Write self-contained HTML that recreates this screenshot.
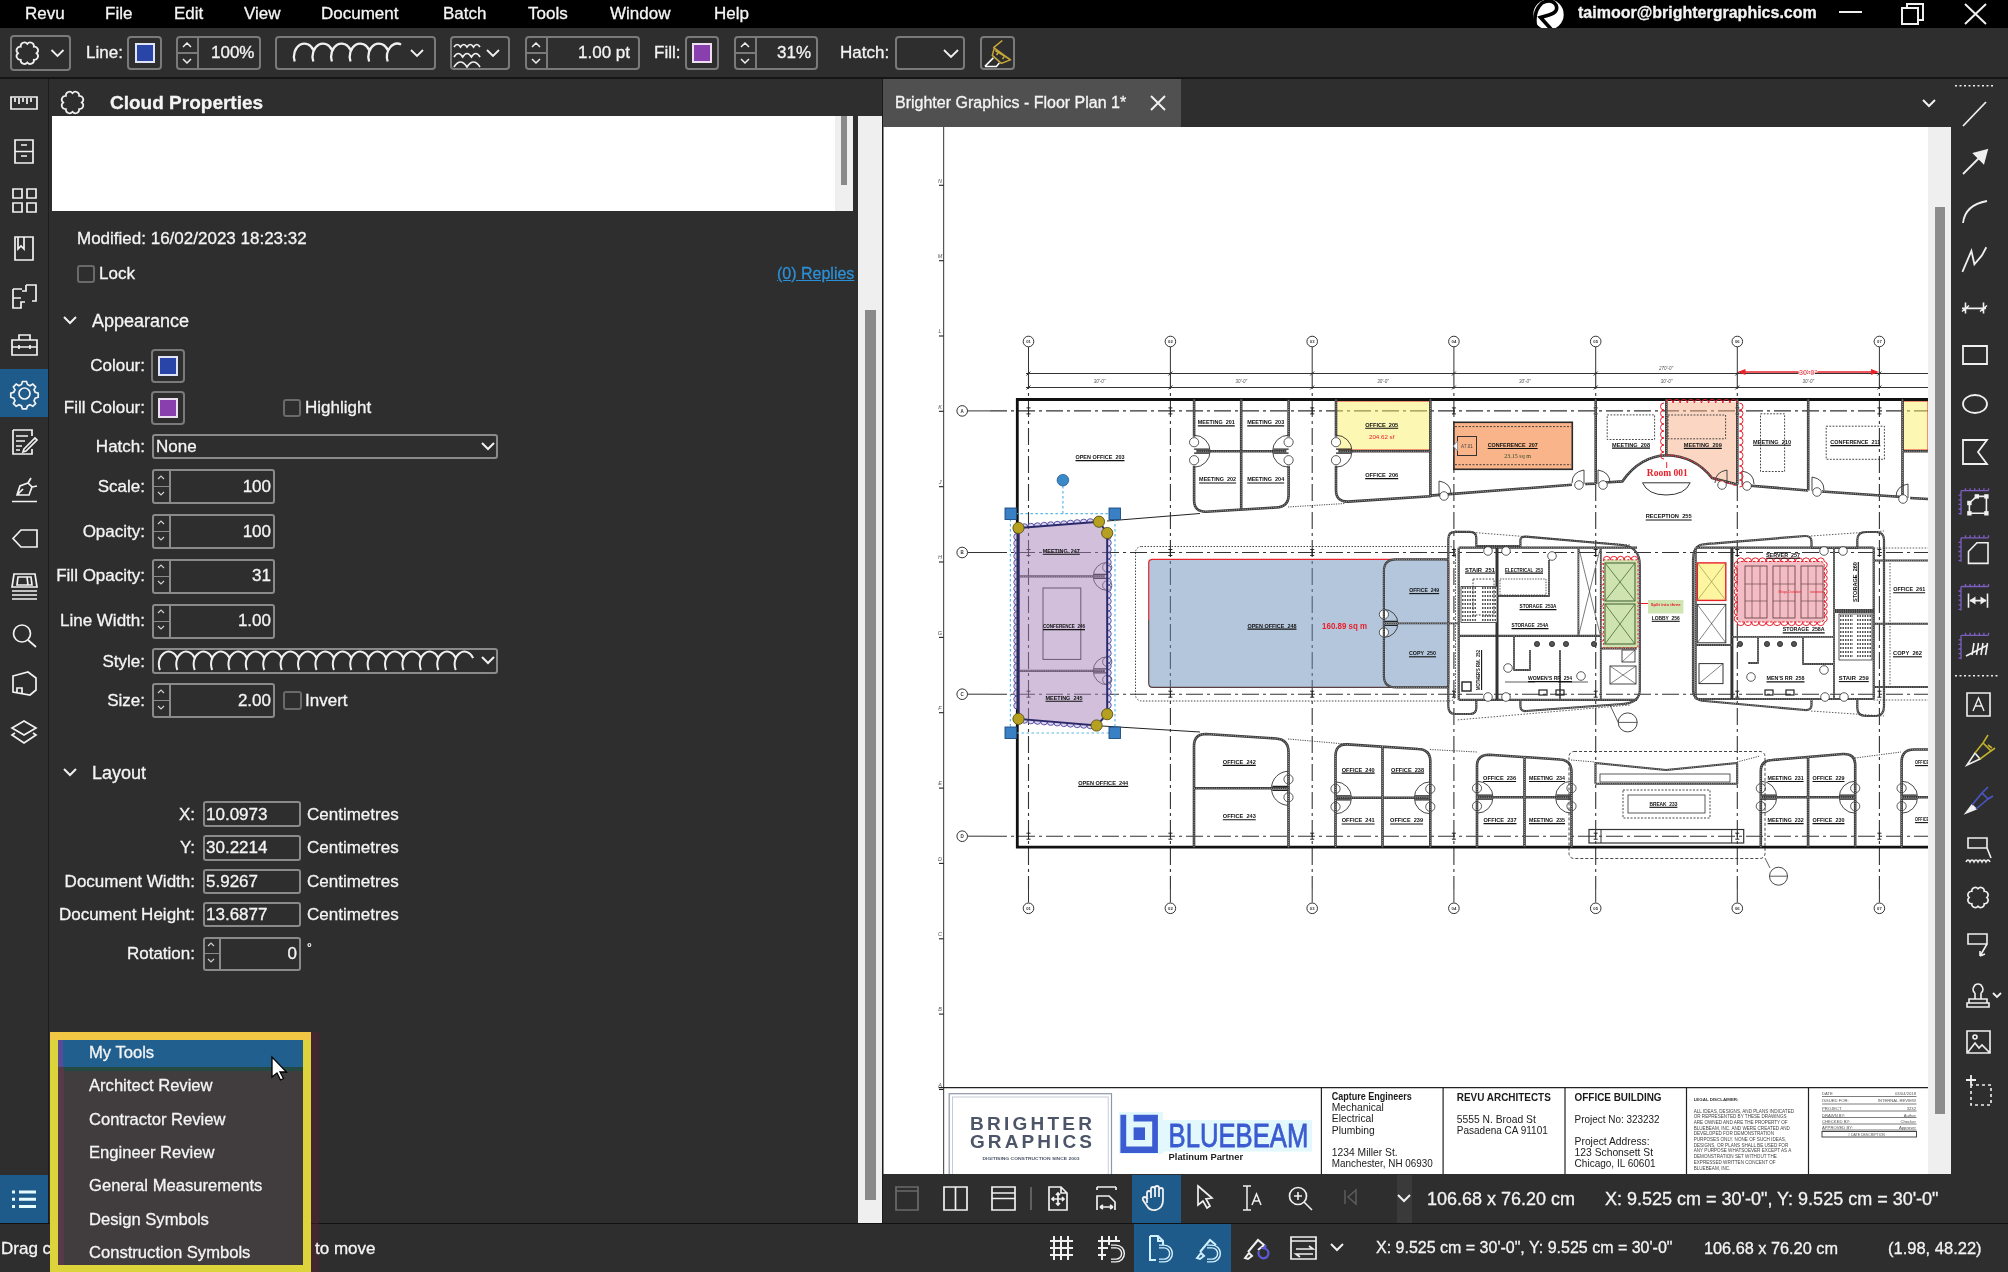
<!DOCTYPE html>
<html><head><meta charset="utf-8"><style>
*{margin:0;padding:0;box-sizing:border-box}
body{will-change:transform;width:2008px;height:1272px;overflow:hidden;background:#2e2e2e;font-family:"Liberation Sans",sans-serif;color:#f4f4f4;position:relative}
.a{position:absolute}
.t{position:absolute;white-space:pre;line-height:1;font-size:17px;-webkit-text-stroke:0.3px currentColor}
.box{position:absolute;border:2px solid #7a7a7a;border-radius:4px}
.fld{position:absolute;border:2px solid #8a8a8a;border-radius:3px}
svg{position:absolute;overflow:visible}
</style></head><body>
<!-- menubar -->
<div class="a" style="left:0;top:0;width:2008px;height:28px;background:#000"></div>
<div class="t" style="left:25px;top:5px">Revu</div>
<div class="t" style="left:105px;top:5px">File</div>
<div class="t" style="left:174px;top:5px">Edit</div>
<div class="t" style="left:244px;top:5px">View</div>
<div class="t" style="left:321px;top:5px">Document</div>
<div class="t" style="left:443px;top:5px">Batch</div>
<div class="t" style="left:528px;top:5px">Tools</div>
<div class="t" style="left:610px;top:5px">Window</div>
<div class="t" style="left:714px;top:5px">Help</div>
<div class="t" style="left:1578px;top:5px;font-weight:bold;font-size:16px">taimoor@brightergraphics.com</div>
<!-- toolbar -->
<!-- toolbar items -->
<div class="box" style="left:10px;top:35px;width:61px;height:36px"></div>
<svg style="left:0;top:0" width="1100" height="80" viewBox="0 0 1100 80" fill="none" stroke="#f0f0f0" stroke-width="1.8">
 <path id="cld" d="M27.3,43.9 A3.70,3.70 0 0 1 33.9,46.6 A3.70,3.70 0 0 1 36.6,53.2 A3.70,3.70 0 0 1 33.9,59.8 A3.70,3.70 0 0 1 27.3,62.5 A3.70,3.70 0 0 1 20.7,59.8 A3.70,3.70 0 0 1 18.0,53.2 A3.70,3.70 0 0 1 20.7,46.6 A3.70,3.70 0 0 1 27.3,43.9z"/>
 <path d="M51.5,50 l6,6 l6,-6"/>
 <path d="M411,50 l6,6 l6,-6 M487,50 l6,6 l6,-6 M944,50 l7,7 l7,-7"/>
 <path d="M183,47 l4,-4 l4,4 M183,59 l4,4 l4,-4 M532,47 l4,-4 l4,4 M532,59 l4,4 l4,-4 M741,47 l4,-4 l4,4 M741,59 l4,4 l4,-4" stroke-width="1.5"/>
 <path stroke-width="2.3" d="M294.7,61.5 A10.5,13 0 0 1 313.7,50.5 M313.3,61.5 A10.5,13 0 0 1 332.3,50.5 M331.9,61.5 A10.5,13 0 0 1 350.9,50.5 M350.5,61.5 A10.5,13 0 0 1 369.5,50.5 M369.1,61.5 A10.5,13 0 0 1 388.1,50.5 M387.7,61.5 A10.5,13 0 0 1 401.1,44.5"/>
 <path stroke-width="1.7" d="M454,47 q3.25,-5 6.5,0 q3.25,-5 6.5,0 q3.25,-5 6.5,0 q3.25,-5 6.5,0 M454,57 q4.3,-7 8.7,0 q4.3,-7 8.7,0 q4.3,-7 8.7,0 M454,67 q6.5,-10 13,0 q6.5,-10 13,0"/>
</svg>
<div class="t" style="left:86px;top:44px;font-size:17px">Line:</div>
<div class="box" style="left:127px;top:36px;width:35px;height:34px"></div>
<div class="a" style="left:135px;top:43px;width:20px;height:20px;background:#2a45a8;border:2px solid #dfe3f5"></div>
<div class="box" style="left:176px;top:36px;width:85px;height:34px"></div>
<div class="a" style="left:197px;top:37px;width:2px;height:32px;background:#7a7a7a"></div>
<div class="a" style="left:178px;top:52px;width:20px;height:2px;background:#7a7a7a"></div>
<div class="t" style="left:211px;top:44px;font-size:17px">100%</div>
<div class="box" style="left:275px;top:36px;width:161px;height:34px"></div>
<div class="box" style="left:450px;top:36px;width:60px;height:34px"></div>
<div class="box" style="left:525px;top:36px;width:115px;height:34px"></div>
<div class="a" style="left:546px;top:37px;width:2px;height:32px;background:#7a7a7a"></div>
<div class="a" style="left:527px;top:52px;width:20px;height:2px;background:#7a7a7a"></div>
<div class="t" style="left:578px;top:44px;font-size:17px">1.00 pt</div>
<div class="t" style="left:654px;top:44px;font-size:17px">Fill:</div>
<div class="box" style="left:685px;top:36px;width:34px;height:34px"></div>
<div class="a" style="left:692px;top:43px;width:20px;height:20px;background:#8a3fae;border:2px solid #ecdff2"></div>
<div class="box" style="left:734px;top:36px;width:84px;height:34px"></div>
<div class="a" style="left:755px;top:37px;width:2px;height:32px;background:#7a7a7a"></div>
<div class="a" style="left:736px;top:52px;width:20px;height:2px;background:#7a7a7a"></div>
<div class="t" style="left:777px;top:44px;font-size:17px">31%</div>
<div class="t" style="left:840px;top:44px;font-size:17px">Hatch:</div>
<div class="box" style="left:895px;top:36px;width:70px;height:34px"></div>
<div class="box" style="left:980px;top:36px;width:35px;height:34px"></div>
<svg style="left:980px;top:36px" width="35" height="34" viewBox="0 0 35 34" fill="none" stroke-width="1.5">
 <path stroke="#c9a83a" d="M13.3,11.9 L22.3,4.5 M14.3,11.9 L12.3,19.4 L21.3,27.4 L30.3,23.9 Z M15.3,14.5 L29.5,23 M18,17 l-1.5,2 M24,21 l-1.5,2"/>
 <path stroke="#ffffff" d="M4.9,30.4 L13.3,21.9 M4.9,30.4 H16.4 L19.3,26.9"/>
</svg>
<!-- window controls -->
<svg style="left:1520px;top:0;overflow:hidden" width="488" height="28" viewBox="1520 0 488 28" fill="none" stroke="#f0f0f0" stroke-width="2">
 <circle cx="1548.5" cy="14.5" r="15.2" fill="#fff" stroke="none"/>
 <path d="M1536,29 Q1532,12 1542,3 Q1551,-2 1556,5 Q1559,12 1549,15 L1540.5,17.5 L1551,29" stroke="#000" stroke-width="3.6"/>
 <path d="M1839,12 h23"/>
 <path d="M1902,8 h16 v16 h-16z M1907,8 v-4 h16 v16 h-5"/>
 <path d="M1965,4 l21,20 M1986,4 l-21,20"/>
</svg>

<div class="a" style="left:0;top:77px;width:2008px;height:2px;background:#151515"></div>
<!-- left sidebar -->
<div class="a" style="left:48px;top:79px;width:1px;height:1145px;background:#1c1c1c"></div>
<div class="a" style="left:0;top:369px;width:48px;height:48px;background:#1f5b8a"></div>
<div class="a" style="left:0;top:1175px;width:48px;height:48px;background:#1f5b8a"></div>

<svg style="left:0;top:0" width="48" height="1272" viewBox="0 0 48 1272" fill="none" stroke="#f2f2f2" stroke-width="1.7">
 <!-- ruler -->
 <path d="M11,97 h26 v12 h-26z M15,98 v4 M19,98 v6 M23,98 v4 M27,98 v6 M31,98 v4"/>
 <!-- cabinet -->
 <path d="M15,140 h18 v23 h-18z M15,151.5 h18 M21,145 h6 M21,156 h6"/>
 <!-- grid -->
 <path d="M13,189 h9 v9 h-9z M27,189 h9 v9 h-9z M13,203 h9 v9 h-9z M27,203 h9 v9 h-9z"/>
 <!-- bookmark -->
 <path d="M15,237 h18 v23 h-18z M18,237 v12 l3,-3 l3,3 v-12"/>
 <!-- floorplan -->
 <path d="M13,289 h9 M26,285 h10 v16 h-4 M13,289 v19 h8 v-6 h4 M13,298 h8 M26,285 v6 h-4"/>
 <!-- toolbox -->
 <path d="M12,340 h25 v15 h-25z M12,347 h25 M19,340 v-5 h11 v5 M19,345 v4 M30,345 v4"/>
 <!-- gear -->
 <circle cx="24.5" cy="393.5" r="5.5"/>
 <path d="M22.5,381.5 h4 l1,3 l2.5,1.2 l2.8,-1.6 l2.8,2.8 l-1.6,2.8 l1.2,2.5 l3,1 v4 l-3,1 l-1.2,2.5 l1.6,2.8 l-2.8,2.8 l-2.8,-1.6 l-2.5,1.2 l-1,3 h-4 l-1,-3 l-2.5,-1.2 l-2.8,1.6 l-2.8,-2.8 l1.6,-2.8 l-1.2,-2.5 l-3,-1 v-4 l3,-1 l1.2,-2.5 l-1.6,-2.8 l2.8,-2.8 l2.8,1.6 l2.5,-1.2z"/>
 <!-- edit -->
 <path d="M13,430 h19 v6 M13,430 v24 h19 v-5 M16,436 h12 M16,441 h9 M16,446 h6 M16,450 h4 M24,449 l11,-11 l2,2 l-11,11 l-3,1z"/>
 <!-- pen -->
 <path d="M12,501.5 h25 M17,495 l3,-9 l8,-3 l4,4 l-3,8z M17,495 l6,-6 M28,483 l3,-5 M32,487 l5,-1"/>
 <!-- tag -->
 <path d="M37,530 v17 h-16 l-8,-8.5 l8,-8.5z"/>
 <!-- scanner -->
 <path d="M14,574 h21 l2,13 h-25z M18,577 h13 l1,8 h-15z M27,577 l1,8 M12,591 h25 M12,595 h25 M12,599 h25"/>
 <!-- search -->
 <circle cx="22" cy="633.5" r="8.5"/>
 <path d="M28,640 l8,7"/>
 <!-- 3d house -->
 <path d="M13,676 l15,-4 l8,6 v12 l-6,5 l-17,-3z M17,693 v-5 h5 v6"/>
 <!-- layers -->
 <path d="M24,721 l12,7 l-12,7 l-12,-7z M15,733 l-3,2 l12,8 l12,-8 l-3,-2"/>
 <!-- list -->
 <path d="M12,1192 h3 M12,1199.2 h3 M12,1206.4 h3 M19,1192 h17 M19,1199.2 h17 M19,1206.4 h17" stroke-width="3" stroke="#e6fbff"/>
</svg>
<!-- panel -->
<div class="a" style="left:52px;top:116px;width:801px;height:95px;background:#fff"></div>
<div class="a" style="left:835px;top:116px;width:18px;height:95px;background:#efefef"></div>
<div class="a" style="left:841px;top:116px;width:6px;height:69px;background:#8a8a8a"></div>
<div class="a" style="left:858px;top:116px;width:24px;height:1107px;background:#efefef"></div>
<div class="a" style="left:865px;top:310px;width:11px;height:890px;background:#8a8a8a"></div>
<div class="a" style="left:882px;top:79px;width:1px;height:1145px;background:#1a1a1a"></div>

<svg style="left:0;top:0" width="880" height="1272" viewBox="0 0 880 1272" fill="none" stroke="#f0f0f0" stroke-width="1.7">
 <path d="M72.5,93.2 A3.70,3.70 0 0 1 79.1,95.9 A3.70,3.70 0 0 1 81.8,102.5 A3.70,3.70 0 0 1 79.1,109.1 A3.70,3.70 0 0 1 72.5,111.8 A3.70,3.70 0 0 1 65.9,109.1 A3.70,3.70 0 0 1 63.2,102.5 A3.70,3.70 0 0 1 65.9,95.9 A3.70,3.70 0 0 1 72.5,93.2z"/>
 <path d="M64,317 l6,6 l6,-6 M64,769 l6,6 l6,-6" stroke-width="2"/>
 <path d="M482,443 l6,6 l6,-6 M482,657 l6,6 l6,-6" stroke-width="2"/>
 <path d="M160.0,670 A9.8,12.5 0 0 1 177.3,658.2 M177.4,670 A9.8,12.5 0 0 1 194.7,658.2 M194.8,670 A9.8,12.5 0 0 1 212.1,658.2 M212.2,670 A9.8,12.5 0 0 1 229.5,658.2 M229.6,670 A9.8,12.5 0 0 1 246.9,658.2 M247.0,670 A9.8,12.5 0 0 1 264.3,658.2 M264.4,670 A9.8,12.5 0 0 1 281.7,658.2 M281.8,670 A9.8,12.5 0 0 1 299.1,658.2 M299.2,670 A9.8,12.5 0 0 1 316.5,658.2 M316.6,670 A9.8,12.5 0 0 1 333.9,658.2 M334.0,670 A9.8,12.5 0 0 1 351.3,658.2 M351.4,670 A9.8,12.5 0 0 1 368.7,658.2 M368.8,670 A9.8,12.5 0 0 1 386.1,658.2 M386.2,670 A9.8,12.5 0 0 1 403.5,658.2 M403.6,670 A9.8,12.5 0 0 1 420.9,658.2 M421.0,670 A9.8,12.5 0 0 1 438.3,658.2 M438.4,670 A9.8,12.5 0 0 1 455.7,658.2 M455.8,670 A9.8,12.5 0 0 1 473.1,658.2" stroke-width="2" clip-path="url(#stclip)"/>
 <clipPath id="stclip"><rect x="155" y="648" width="320" height="26"/></clipPath>
 <path d="M158,479 l3,-3 l3,3 M158,492 l3,3 l3,-3 M158,524 l3,-3 l3,3 M158,537 l3,3 l3,-3 M158,568 l3,-3 l3,3 M158,581 l3,3 l3,-3 M158,613 l3,-3 l3,3 M158,626 l3,3 l3,-3 M158,693 l3,-3 l3,3 M158,706 l3,3 l3,-3 M208,946 l3,-3 l3,3 M208,959 l3,3 l3,-3" stroke-width="1.2" stroke="#cfcfcf"/>
</svg>
<div class="t" style="left:110px;top:93px;font-size:19px;font-weight:bold">Cloud Properties</div>
<div class="t" style="left:77px;top:230px">Modified: 16/02/2023 18:23:32</div>
<div class="fld" style="left:77px;top:265px;width:18px;height:18px;border-color:#6a6a6a"></div>
<div class="t" style="left:99px;top:265px">Lock</div>
<div class="t" style="left:777px;top:266px;font-size:16px;color:#2d8fd6;text-decoration:underline">(0) Replies</div>
<div class="t" style="left:92px;top:312px;font-size:18px">Appearance</div>
<div class="t" style="left:92px;top:764px;font-size:18px">Layout</div>
<div class="t" style="right:1863px;top:357px">Colour:</div>
<div class="box" style="left:151px;top:349px;width:34px;height:34px"></div>
<div class="a" style="left:158px;top:356px;width:20px;height:20px;background:#2a45a8;border:2px solid #dfe3f5"></div>
<div class="t" style="right:1863px;top:399px">Fill Colour:</div>
<div class="box" style="left:151px;top:391px;width:34px;height:34px"></div>
<div class="a" style="left:158px;top:398px;width:20px;height:20px;background:#8a3fae;border:2px solid #ecdff2"></div>
<div class="fld" style="left:283px;top:399px;width:18px;height:18px;border-color:#6a6a6a"></div>
<div class="t" style="left:305px;top:399px">Highlight</div>
<div class="t" style="right:1863px;top:438px">Hatch:</div>
<div class="fld" style="left:152px;top:434px;width:346px;height:25px"></div>
<div class="t" style="left:156px;top:438px">None</div>
<div class="t" style="right:1863px;top:478px">Scale:</div>
<div class="fld" style="left:152px;top:469px;width:123px;height:35px"></div>
<div class="a" style="left:169px;top:470px;width:2px;height:33px;background:#8a8a8a"></div>
<div class="a" style="left:153px;top:486px;width:17px;height:1px;background:#8a8a8a"></div>
<div class="t" style="right:1737px;top:478px">100</div>
<div class="t" style="right:1863px;top:523px">Opacity:</div>
<div class="fld" style="left:152px;top:514px;width:123px;height:35px"></div>
<div class="a" style="left:169px;top:515px;width:2px;height:33px;background:#8a8a8a"></div>
<div class="a" style="left:153px;top:531px;width:17px;height:1px;background:#8a8a8a"></div>
<div class="t" style="right:1737px;top:523px">100</div>
<div class="t" style="right:1863px;top:567px">Fill Opacity:</div>
<div class="fld" style="left:152px;top:559px;width:123px;height:35px"></div>
<div class="a" style="left:169px;top:560px;width:2px;height:33px;background:#8a8a8a"></div>
<div class="a" style="left:153px;top:576px;width:17px;height:1px;background:#8a8a8a"></div>
<div class="t" style="right:1737px;top:567px">31</div>
<div class="t" style="right:1863px;top:612px">Line Width:</div>
<div class="fld" style="left:152px;top:604px;width:123px;height:35px"></div>
<div class="a" style="left:169px;top:605px;width:2px;height:33px;background:#8a8a8a"></div>
<div class="a" style="left:153px;top:621px;width:17px;height:1px;background:#8a8a8a"></div>
<div class="t" style="right:1737px;top:612px">1.00</div>
<div class="t" style="right:1863px;top:653px">Style:</div>
<div class="fld" style="left:152px;top:648px;width:346px;height:26px"></div>
<div class="t" style="right:1863px;top:692px">Size:</div>
<div class="fld" style="left:152px;top:683px;width:123px;height:35px"></div>
<div class="a" style="left:169px;top:684px;width:2px;height:33px;background:#8a8a8a"></div>
<div class="a" style="left:153px;top:700px;width:17px;height:1px;background:#8a8a8a"></div>
<div class="t" style="right:1737px;top:692px">2.00</div>
<div class="fld" style="left:283px;top:691px;width:19px;height:19px;border-color:#6a6a6a"></div>
<div class="t" style="left:305px;top:692px">Invert</div>
<div class="t" style="right:1813px;top:806px">X:</div>
<div class="fld" style="left:203px;top:801px;width:98px;height:26px"></div>
<div class="t" style="left:206px;top:806px">10.0973</div>
<div class="t" style="left:307px;top:806px">Centimetres</div>
<div class="t" style="right:1813px;top:839px">Y:</div>
<div class="fld" style="left:203px;top:835px;width:98px;height:26px"></div>
<div class="t" style="left:206px;top:839px">30.2214</div>
<div class="t" style="left:307px;top:839px">Centimetres</div>
<div class="t" style="right:1813px;top:873px">Document Width:</div>
<div class="fld" style="left:203px;top:869px;width:98px;height:25px"></div>
<div class="t" style="left:206px;top:873px">5.9267</div>
<div class="t" style="left:307px;top:873px">Centimetres</div>
<div class="t" style="right:1813px;top:906px">Document Height:</div>
<div class="fld" style="left:203px;top:902px;width:98px;height:25px"></div>
<div class="t" style="left:206px;top:906px">13.6877</div>
<div class="t" style="left:307px;top:906px">Centimetres</div>
<div class="t" style="right:1813px;top:945px">Rotation:</div>
<div class="fld" style="left:203px;top:937px;width:98px;height:34px"></div>
<div class="a" style="left:219px;top:938px;width:2px;height:32px;background:#8a8a8a"></div>
<div class="a" style="left:204px;top:953px;width:16px;height:1px;background:#8a8a8a"></div>
<div class="t" style="right:1711px;top:945px">0</div>
<div class="t" style="left:307px;top:942px;font-size:12px">°</div>
<!-- popup --><div style="position:absolute;left:0;top:0;z-index:5">
<div class="a" style="left:311px;top:1032px;width:8px;height:240px;background:rgba(90,30,50,0.45)"></div>
<div class="a" style="left:50px;top:1032px;width:261px;height:240px;background:#dcd43a"></div>
<div class="a" style="left:50px;top:1032px;width:261px;height:8px;background:#f2c645"></div>
<div class="a" style="left:58px;top:1040px;width:245px;height:225px;background:#413d3f"></div>
<div class="a" style="left:58px;top:1040px;width:6px;height:225px;background:#573a48"></div>
<div class="a" style="left:58px;top:1040px;width:245px;height:27px;background:#21608e"></div>
<div class="a" style="left:58px;top:1040px;width:5px;height:27px;background:#5a4a9a"></div>
<div class="a" style="left:64px;top:1067px;width:239px;height:4px;background:#254a44"></div>
<div class="t" style="left:89px;top:1045px;font-size:16.6px">My Tools</div>
<div class="t" style="left:89px;top:1078px;font-size:16.6px">Architect Review</div>
<div class="t" style="left:89px;top:1112px;font-size:16.6px">Contractor Review</div>
<div class="t" style="left:89px;top:1145px;font-size:16.6px">Engineer Review</div>
<div class="t" style="left:89px;top:1178px;font-size:16.6px">General Measurements</div>
<div class="t" style="left:89px;top:1212px;font-size:16.6px">Design Symbols</div>
<div class="t" style="left:89px;top:1245px;font-size:16.6px">Construction Symbols</div>
<svg style="left:270px;top:1055px" width="20" height="30" viewBox="0 0 20 30"><path d="M2,2 v20 l5,-4 l3.5,7 l3,-1.5 l-3.5,-6.5 h6.5z" fill="#fff" stroke="#000" stroke-width="1.3"/></svg>
</div>
<div class="t" style="left:1px;top:1240px">Drag c</div>
<div class="t" style="left:315px;top:1240px;z-index:6">to move</div>
<!-- tab bar -->
<div class="a" style="left:883px;top:79px;width:298px;height:48px;background:#505050"></div>
<div class="t" style="left:895px;top:95px;font-size:16px">Brighter Graphics - Floor Plan 1*</div>
<!-- doc -->
<div class="a" style="left:883px;top:127px;width:1068px;height:1047px;background:#fff"></div>
<div class="a" style="left:1928px;top:127px;width:23px;height:1047px;background:#efefef"></div>
<!--PLAN--><svg style="left:883px;top:127px;overflow:hidden" width="1045" height="1047" viewBox="883 127 1045 1047" font-family="Liberation Sans"><line x1="883.5" y1="127" x2="883.5" y2="1174" stroke="#8a8a8a" stroke-width="1"/>
<line x1="943.6" y1="127" x2="943.6" y2="1174" stroke="#555" stroke-width="1.2"/>
<line x1="939" y1="185.3" x2="943.6" y2="185.3" stroke="#222" stroke-width="1.1"/>
<text x="940" y="182.5" font-size="5.5" fill="#555" text-anchor="middle" font-style="italic">N</text>
<line x1="939" y1="260.7" x2="943.6" y2="260.7" stroke="#222" stroke-width="1.1"/>
<text x="940" y="257.9" font-size="5.5" fill="#555" text-anchor="middle" font-style="italic">M</text>
<line x1="939" y1="336.0" x2="943.6" y2="336.0" stroke="#222" stroke-width="1.1"/>
<text x="940" y="333.2" font-size="5.5" fill="#555" text-anchor="middle" font-style="italic">L</text>
<line x1="939" y1="411.3" x2="943.6" y2="411.3" stroke="#222" stroke-width="1.1"/>
<text x="940" y="408.5" font-size="5.5" fill="#555" text-anchor="middle" font-style="italic">K</text>
<line x1="939" y1="486.7" x2="943.6" y2="486.7" stroke="#222" stroke-width="1.1"/>
<text x="940" y="483.9" font-size="5.5" fill="#555" text-anchor="middle" font-style="italic">J</text>
<line x1="939" y1="562.0" x2="943.6" y2="562.0" stroke="#222" stroke-width="1.1"/>
<text x="940" y="559.2" font-size="5.5" fill="#555" text-anchor="middle" font-style="italic">H</text>
<line x1="939" y1="637.4" x2="943.6" y2="637.4" stroke="#222" stroke-width="1.1"/>
<text x="940" y="634.6" font-size="5.5" fill="#555" text-anchor="middle" font-style="italic">G</text>
<line x1="939" y1="712.7" x2="943.6" y2="712.7" stroke="#222" stroke-width="1.1"/>
<text x="940" y="709.9" font-size="5.5" fill="#555" text-anchor="middle" font-style="italic">F</text>
<line x1="939" y1="788.1" x2="943.6" y2="788.1" stroke="#222" stroke-width="1.1"/>
<text x="940" y="785.3" font-size="5.5" fill="#555" text-anchor="middle" font-style="italic">E</text>
<line x1="939" y1="863.4" x2="943.6" y2="863.4" stroke="#222" stroke-width="1.1"/>
<text x="940" y="860.6" font-size="5.5" fill="#555" text-anchor="middle" font-style="italic">D</text>
<line x1="939" y1="938.8" x2="943.6" y2="938.8" stroke="#222" stroke-width="1.1"/>
<text x="940" y="936.0" font-size="5.5" fill="#555" text-anchor="middle" font-style="italic">C</text>
<line x1="939" y1="1014.1" x2="943.6" y2="1014.1" stroke="#222" stroke-width="1.1"/>
<text x="940" y="1011.3" font-size="5.5" fill="#555" text-anchor="middle" font-style="italic">B</text>
<line x1="939" y1="1089.5" x2="943.6" y2="1089.5" stroke="#222" stroke-width="1.1"/>
<text x="940" y="1086.7" font-size="5.5" fill="#555" text-anchor="middle" font-style="italic">A</text>
<line x1="1028.5" y1="347" x2="1028.5" y2="372" stroke="#333" stroke-width="1"/>
<line x1="1028.5" y1="372" x2="1028.5" y2="889" stroke="#333" stroke-width="1.1" stroke-dasharray="17 4 3 4"/>
<line x1="1028.5" y1="889" x2="1028.5" y2="902.5" stroke="#333" stroke-width="1"/>
<circle cx="1028.5" cy="341.5" r="5.3" fill="#fff" stroke="#333" stroke-width="1"/>
<text x="1028.5" y="343.1" font-size="4.2" fill="#333" text-anchor="middle" font-weight="bold">01</text>
<circle cx="1028.5" cy="908.3" r="5.3" fill="#fff" stroke="#333" stroke-width="1"/>
<text x="1028.5" y="909.9" font-size="4.2" fill="#333" text-anchor="middle" font-weight="bold">01</text>
<line x1="1170.4" y1="347" x2="1170.4" y2="372" stroke="#333" stroke-width="1"/>
<line x1="1170.4" y1="372" x2="1170.4" y2="889" stroke="#333" stroke-width="1.1" stroke-dasharray="17 4 3 4"/>
<line x1="1170.4" y1="889" x2="1170.4" y2="902.5" stroke="#333" stroke-width="1"/>
<circle cx="1170.4" cy="341.5" r="5.3" fill="#fff" stroke="#333" stroke-width="1"/>
<text x="1170.4" y="343.1" font-size="4.2" fill="#333" text-anchor="middle" font-weight="bold">02</text>
<circle cx="1170.4" cy="908.3" r="5.3" fill="#fff" stroke="#333" stroke-width="1"/>
<text x="1170.4" y="909.9" font-size="4.2" fill="#333" text-anchor="middle" font-weight="bold">02</text>
<line x1="1312.2" y1="347" x2="1312.2" y2="372" stroke="#333" stroke-width="1"/>
<line x1="1312.2" y1="372" x2="1312.2" y2="889" stroke="#333" stroke-width="1.1" stroke-dasharray="17 4 3 4"/>
<line x1="1312.2" y1="889" x2="1312.2" y2="902.5" stroke="#333" stroke-width="1"/>
<circle cx="1312.2" cy="341.5" r="5.3" fill="#fff" stroke="#333" stroke-width="1"/>
<text x="1312.2" y="343.1" font-size="4.2" fill="#333" text-anchor="middle" font-weight="bold">03</text>
<circle cx="1312.2" cy="908.3" r="5.3" fill="#fff" stroke="#333" stroke-width="1"/>
<text x="1312.2" y="909.9" font-size="4.2" fill="#333" text-anchor="middle" font-weight="bold">03</text>
<line x1="1453.9" y1="347" x2="1453.9" y2="372" stroke="#333" stroke-width="1"/>
<line x1="1453.9" y1="372" x2="1453.9" y2="889" stroke="#333" stroke-width="1.1" stroke-dasharray="17 4 3 4"/>
<line x1="1453.9" y1="889" x2="1453.9" y2="902.5" stroke="#333" stroke-width="1"/>
<circle cx="1453.9" cy="341.5" r="5.3" fill="#fff" stroke="#333" stroke-width="1"/>
<text x="1453.9" y="343.1" font-size="4.2" fill="#333" text-anchor="middle" font-weight="bold">04</text>
<circle cx="1453.9" cy="908.3" r="5.3" fill="#fff" stroke="#333" stroke-width="1"/>
<text x="1453.9" y="909.9" font-size="4.2" fill="#333" text-anchor="middle" font-weight="bold">04</text>
<line x1="1595.7" y1="347" x2="1595.7" y2="372" stroke="#333" stroke-width="1"/>
<line x1="1595.7" y1="372" x2="1595.7" y2="889" stroke="#333" stroke-width="1.1" stroke-dasharray="17 4 3 4"/>
<line x1="1595.7" y1="889" x2="1595.7" y2="902.5" stroke="#333" stroke-width="1"/>
<circle cx="1595.7" cy="341.5" r="5.3" fill="#fff" stroke="#333" stroke-width="1"/>
<text x="1595.7" y="343.1" font-size="4.2" fill="#333" text-anchor="middle" font-weight="bold">05</text>
<circle cx="1595.7" cy="908.3" r="5.3" fill="#fff" stroke="#333" stroke-width="1"/>
<text x="1595.7" y="909.9" font-size="4.2" fill="#333" text-anchor="middle" font-weight="bold">05</text>
<line x1="1737.3" y1="347" x2="1737.3" y2="372" stroke="#333" stroke-width="1"/>
<line x1="1737.3" y1="372" x2="1737.3" y2="889" stroke="#333" stroke-width="1.1" stroke-dasharray="17 4 3 4"/>
<line x1="1737.3" y1="889" x2="1737.3" y2="902.5" stroke="#333" stroke-width="1"/>
<circle cx="1737.3" cy="341.5" r="5.3" fill="#fff" stroke="#333" stroke-width="1"/>
<text x="1737.3" y="343.1" font-size="4.2" fill="#333" text-anchor="middle" font-weight="bold">06</text>
<circle cx="1737.3" cy="908.3" r="5.3" fill="#fff" stroke="#333" stroke-width="1"/>
<text x="1737.3" y="909.9" font-size="4.2" fill="#333" text-anchor="middle" font-weight="bold">06</text>
<line x1="1879.4" y1="347" x2="1879.4" y2="372" stroke="#333" stroke-width="1"/>
<line x1="1879.4" y1="372" x2="1879.4" y2="889" stroke="#333" stroke-width="1.1" stroke-dasharray="17 4 3 4"/>
<line x1="1879.4" y1="889" x2="1879.4" y2="902.5" stroke="#333" stroke-width="1"/>
<circle cx="1879.4" cy="341.5" r="5.3" fill="#fff" stroke="#333" stroke-width="1"/>
<text x="1879.4" y="343.1" font-size="4.2" fill="#333" text-anchor="middle" font-weight="bold">07</text>
<circle cx="1879.4" cy="908.3" r="5.3" fill="#fff" stroke="#333" stroke-width="1"/>
<text x="1879.4" y="909.9" font-size="4.2" fill="#333" text-anchor="middle" font-weight="bold">07</text>
<line x1="967.5" y1="410.9" x2="990" y2="410.9" stroke="#333" stroke-width="1"/>
<line x1="990" y1="410.9" x2="1928" y2="410.9" stroke="#333" stroke-width="1.1" stroke-dasharray="17 4 3 4"/>
<circle cx="962.2" cy="410.9" r="5.3" fill="#fff" stroke="#333" stroke-width="1"/>
<text x="962.2" y="412.5" font-size="4.5" fill="#333" text-anchor="middle" font-weight="bold">A</text>
<path d="M1026.5,407.9 h4 M1026.5,413.9 h4 M1028.5,407.9 v6" stroke="#222" stroke-width="1"/>
<path d="M1168.4,407.9 h4 M1168.4,413.9 h4 M1170.4,407.9 v6" stroke="#222" stroke-width="1"/>
<path d="M1310.2,407.9 h4 M1310.2,413.9 h4 M1312.2,407.9 v6" stroke="#222" stroke-width="1"/>
<path d="M1451.9,407.9 h4 M1451.9,413.9 h4 M1453.9,407.9 v6" stroke="#222" stroke-width="1"/>
<path d="M1593.7,407.9 h4 M1593.7,413.9 h4 M1595.7,407.9 v6" stroke="#222" stroke-width="1"/>
<path d="M1735.3,407.9 h4 M1735.3,413.9 h4 M1737.3,407.9 v6" stroke="#222" stroke-width="1"/>
<path d="M1877.4,407.9 h4 M1877.4,413.9 h4 M1879.4,407.9 v6" stroke="#222" stroke-width="1"/>
<line x1="967.5" y1="552.5" x2="990" y2="552.5" stroke="#333" stroke-width="1"/>
<line x1="990" y1="552.5" x2="1928" y2="552.5" stroke="#333" stroke-width="1.1" stroke-dasharray="17 4 3 4"/>
<circle cx="962.2" cy="552.5" r="5.3" fill="#fff" stroke="#333" stroke-width="1"/>
<text x="962.2" y="554.1" font-size="4.5" fill="#333" text-anchor="middle" font-weight="bold">B</text>
<path d="M1026.5,549.5 h4 M1026.5,555.5 h4 M1028.5,549.5 v6" stroke="#222" stroke-width="1"/>
<path d="M1168.4,549.5 h4 M1168.4,555.5 h4 M1170.4,549.5 v6" stroke="#222" stroke-width="1"/>
<path d="M1310.2,549.5 h4 M1310.2,555.5 h4 M1312.2,549.5 v6" stroke="#222" stroke-width="1"/>
<path d="M1451.9,549.5 h4 M1451.9,555.5 h4 M1453.9,549.5 v6" stroke="#222" stroke-width="1"/>
<path d="M1593.7,549.5 h4 M1593.7,555.5 h4 M1595.7,549.5 v6" stroke="#222" stroke-width="1"/>
<path d="M1735.3,549.5 h4 M1735.3,555.5 h4 M1737.3,549.5 v6" stroke="#222" stroke-width="1"/>
<path d="M1877.4,549.5 h4 M1877.4,555.5 h4 M1879.4,549.5 v6" stroke="#222" stroke-width="1"/>
<line x1="967.5" y1="694.2" x2="990" y2="694.2" stroke="#333" stroke-width="1"/>
<line x1="990" y1="694.2" x2="1928" y2="694.2" stroke="#333" stroke-width="1.1" stroke-dasharray="17 4 3 4"/>
<circle cx="962.2" cy="694.2" r="5.3" fill="#fff" stroke="#333" stroke-width="1"/>
<text x="962.2" y="695.8000000000001" font-size="4.5" fill="#333" text-anchor="middle" font-weight="bold">C</text>
<path d="M1026.5,691.2 h4 M1026.5,697.2 h4 M1028.5,691.2 v6" stroke="#222" stroke-width="1"/>
<path d="M1168.4,691.2 h4 M1168.4,697.2 h4 M1170.4,691.2 v6" stroke="#222" stroke-width="1"/>
<path d="M1310.2,691.2 h4 M1310.2,697.2 h4 M1312.2,691.2 v6" stroke="#222" stroke-width="1"/>
<path d="M1451.9,691.2 h4 M1451.9,697.2 h4 M1453.9,691.2 v6" stroke="#222" stroke-width="1"/>
<path d="M1593.7,691.2 h4 M1593.7,697.2 h4 M1595.7,691.2 v6" stroke="#222" stroke-width="1"/>
<path d="M1735.3,691.2 h4 M1735.3,697.2 h4 M1737.3,691.2 v6" stroke="#222" stroke-width="1"/>
<path d="M1877.4,691.2 h4 M1877.4,697.2 h4 M1879.4,691.2 v6" stroke="#222" stroke-width="1"/>
<line x1="967.5" y1="836.2" x2="990" y2="836.2" stroke="#333" stroke-width="1"/>
<line x1="990" y1="836.2" x2="1928" y2="836.2" stroke="#333" stroke-width="1.1" stroke-dasharray="17 4 3 4"/>
<circle cx="962.2" cy="836.2" r="5.3" fill="#fff" stroke="#333" stroke-width="1"/>
<text x="962.2" y="837.8000000000001" font-size="4.5" fill="#333" text-anchor="middle" font-weight="bold">D</text>
<path d="M1026.5,833.2 h4 M1026.5,839.2 h4 M1028.5,833.2 v6" stroke="#222" stroke-width="1"/>
<path d="M1168.4,833.2 h4 M1168.4,839.2 h4 M1170.4,833.2 v6" stroke="#222" stroke-width="1"/>
<path d="M1310.2,833.2 h4 M1310.2,839.2 h4 M1312.2,833.2 v6" stroke="#222" stroke-width="1"/>
<path d="M1451.9,833.2 h4 M1451.9,839.2 h4 M1453.9,833.2 v6" stroke="#222" stroke-width="1"/>
<path d="M1593.7,833.2 h4 M1593.7,839.2 h4 M1595.7,833.2 v6" stroke="#222" stroke-width="1"/>
<path d="M1735.3,833.2 h4 M1735.3,839.2 h4 M1737.3,833.2 v6" stroke="#222" stroke-width="1"/>
<path d="M1877.4,833.2 h4 M1877.4,839.2 h4 M1879.4,833.2 v6" stroke="#222" stroke-width="1"/>
<line x1="1026" y1="373.5" x2="1928" y2="373.5" stroke="#333" stroke-width="1"/>
<line x1="1026" y1="387.5" x2="1928" y2="387.5" stroke="#333" stroke-width="1"/>
<path d="M1026.5,375.5 l4,-4 M1026.5,389.5 l4,-4" stroke="#333" stroke-width="1"/>
<path d="M1168.4,375.5 l4,-4 M1168.4,389.5 l4,-4" stroke="#333" stroke-width="1"/>
<path d="M1310.2,375.5 l4,-4 M1310.2,389.5 l4,-4" stroke="#333" stroke-width="1"/>
<path d="M1451.9,375.5 l4,-4 M1451.9,389.5 l4,-4" stroke="#333" stroke-width="1"/>
<path d="M1593.7,375.5 l4,-4 M1593.7,389.5 l4,-4" stroke="#333" stroke-width="1"/>
<path d="M1735.3,375.5 l4,-4 M1735.3,389.5 l4,-4" stroke="#333" stroke-width="1"/>
<path d="M1877.4,375.5 l4,-4 M1877.4,389.5 l4,-4" stroke="#333" stroke-width="1"/>
<text x="1099.5" y="383" font-size="4.5" fill="#555" text-anchor="middle" font-style="italic">30'-0"</text>
<text x="1241.3" y="383" font-size="4.5" fill="#555" text-anchor="middle" font-style="italic">30'-0"</text>
<text x="1383.1" y="383" font-size="4.5" fill="#555" text-anchor="middle" font-style="italic">30'-0"</text>
<text x="1524.8" y="383" font-size="4.5" fill="#555" text-anchor="middle" font-style="italic">30'-0"</text>
<text x="1666.5" y="383" font-size="4.5" fill="#555" text-anchor="middle" font-style="italic">30'-0"</text>
<text x="1808.3" y="383" font-size="4.5" fill="#555" text-anchor="middle" font-style="italic">30'-0"</text>
<text x="1666" y="369.5" font-size="4.5" fill="#555" text-anchor="middle" font-style="italic">270'-0"</text>
<line x1="1740" y1="372" x2="1876" y2="372" stroke="#e8202a" stroke-width="1.4"/>
<path d="M1737.5,372 l8,-3 v6z M1879,372 l-8,-3 v6z" fill="#e8202a"/>
<text x="1808" y="374.5" font-size="7" fill="#e8202a" text-anchor="middle" stroke="#fff" stroke-width="1.5" paint-order="stroke">30'-0"</text>
<rect x="1336" y="401" width="94.5" height="49" fill="#fbef69" fill-opacity="0.5" stroke="#d9302a" stroke-width="1"/>
<rect x="1903" y="401" width="25" height="49" fill="#fbef69" fill-opacity="0.5" stroke="#d9302a" stroke-width="1"/>
<rect x="1453.9" y="422.3" width="118.4" height="47" fill="#f9b48a" stroke="#2a2a2a" stroke-width="1.6"/>
<path d="M1455,426.6 h116 M1455,464.7 h116" stroke="#333" stroke-width="0.9" stroke-dasharray="2 1.5"/>
<rect x="1457.5" y="436.5" width="19" height="19" fill="none" stroke="#333" stroke-width="1"/>
<path d="M1457.5,441 l-4,5 l4,5" fill="#fff" stroke="#7a8aa0" stroke-width="0.8"/>
<text x="1467" y="447.5" font-size="4.5" fill="#444" text-anchor="middle">A7.01</text>
<path d="M1666.3,402 H1737.3 V484 L1724,484 Q1712,482 1705,470 Q1690,455 1666.3,455.5 Z" fill="#f7af87" fill-opacity="0.5"/>
<rect x="1148.7" y="559.4" width="300" height="128" rx="4" fill="#698db9" fill-opacity="0.5"/>
<path d="M1148.7,620 V563 q0,-3.6 4,-3.6 H1444 q4.7,0 4.7,4 V600" fill="none" stroke="#e52530" stroke-width="1.2"/>
<path d="M1148.7,620 V683 q0,4.4 4,4.4 H1444 q4.7,0 4.7,-4 V600" fill="none" stroke="#5a4040" stroke-width="1.2"/>
<rect x="1135.5" y="546.5" width="320" height="154.5" rx="6" fill="none" stroke="#333" stroke-width="0.9" stroke-dasharray="1.5 1.5"/>
<rect x="1603.4" y="559.8" width="34.6" height="88" fill="#9fc761" fill-opacity="0.5"/>
<rect x="1737" y="561.5" width="87.4" height="60.5" rx="4" fill="#e97989" fill-opacity="0.5"/>
<rect x="1648" y="600" width="35.4" height="13.5" fill="#cfe6b3"/>
<text x="1665.7" y="605.5" font-size="4.3" fill="#e8202a" text-anchor="middle" font-weight="bold">Split into three</text>
<line x1="1638" y1="603.5" x2="1648" y2="603.5" stroke="#e8202a" stroke-width="1"/>
<path d="M1928,399.5 H1017.3 V847.2 H1928" fill="none" stroke="#111" stroke-width="2.8"/>
<circle cx="1028" cy="399.5" r="1.6" fill="#111"/>
<circle cx="1051" cy="399.5" r="1.6" fill="#111"/>
<circle cx="1074" cy="399.5" r="1.6" fill="#111"/>
<circle cx="1097" cy="399.5" r="1.6" fill="#111"/>
<circle cx="1120" cy="399.5" r="1.6" fill="#111"/>
<circle cx="1143" cy="399.5" r="1.6" fill="#111"/>
<circle cx="1166" cy="399.5" r="1.6" fill="#111"/>
<circle cx="1189" cy="399.5" r="1.6" fill="#111"/>
<circle cx="1212" cy="399.5" r="1.6" fill="#111"/>
<circle cx="1235" cy="399.5" r="1.6" fill="#111"/>
<circle cx="1258" cy="399.5" r="1.6" fill="#111"/>
<circle cx="1281" cy="399.5" r="1.6" fill="#111"/>
<circle cx="1304" cy="399.5" r="1.6" fill="#111"/>
<circle cx="1327" cy="399.5" r="1.6" fill="#111"/>
<circle cx="1350" cy="399.5" r="1.6" fill="#111"/>
<circle cx="1373" cy="399.5" r="1.6" fill="#111"/>
<circle cx="1396" cy="399.5" r="1.6" fill="#111"/>
<circle cx="1419" cy="399.5" r="1.6" fill="#111"/>
<circle cx="1442" cy="399.5" r="1.6" fill="#111"/>
<circle cx="1465" cy="399.5" r="1.6" fill="#111"/>
<circle cx="1488" cy="399.5" r="1.6" fill="#111"/>
<circle cx="1511" cy="399.5" r="1.6" fill="#111"/>
<circle cx="1534" cy="399.5" r="1.6" fill="#111"/>
<circle cx="1557" cy="399.5" r="1.6" fill="#111"/>
<circle cx="1580" cy="399.5" r="1.6" fill="#111"/>
<circle cx="1603" cy="399.5" r="1.6" fill="#111"/>
<circle cx="1626" cy="399.5" r="1.6" fill="#111"/>
<circle cx="1649" cy="399.5" r="1.6" fill="#111"/>
<circle cx="1672" cy="399.5" r="1.6" fill="#111"/>
<circle cx="1695" cy="399.5" r="1.6" fill="#111"/>
<circle cx="1718" cy="399.5" r="1.6" fill="#111"/>
<circle cx="1741" cy="399.5" r="1.6" fill="#111"/>
<circle cx="1764" cy="399.5" r="1.6" fill="#111"/>
<circle cx="1787" cy="399.5" r="1.6" fill="#111"/>
<circle cx="1810" cy="399.5" r="1.6" fill="#111"/>
<circle cx="1833" cy="399.5" r="1.6" fill="#111"/>
<circle cx="1856" cy="399.5" r="1.6" fill="#111"/>
<circle cx="1879" cy="399.5" r="1.6" fill="#111"/>
<circle cx="1902" cy="399.5" r="1.6" fill="#111"/>
<circle cx="1925" cy="399.5" r="1.6" fill="#111"/>
<path d="M1194.1,399.5 V500 Q1194.1,512 1206,511.7 L1276,507.5 Q1288.6,507 1288.6,495 V399.5" fill="none" stroke="#3a3a3a" stroke-width="2.6" stroke-linejoin="round"/>
<path d="M1194.1,399.5 V500 Q1194.1,512 1206,511.7 L1276,507.5 Q1288.6,507 1288.6,495 V399.5" fill="none" stroke="#d8d8d8" stroke-width="0.7" stroke-dasharray="1 1.2"/>
<path d="M1241.2,399.5 V509.5" fill="none" stroke="#3a3a3a" stroke-width="2.6" stroke-linejoin="round"/>
<path d="M1241.2,399.5 V509.5" fill="none" stroke="#d8d8d8" stroke-width="0.7" stroke-dasharray="1 1.2"/>
<path d="M1194.1,451.2 H1288.6" fill="none" stroke="#3a3a3a" stroke-width="2.6" stroke-linejoin="round"/>
<path d="M1194.1,451.2 H1288.6" fill="none" stroke="#d8d8d8" stroke-width="0.7" stroke-dasharray="1 1.2"/>
<path d="M1336,399.5 V490 Q1336,502 1348,501.6 L1430.4,496.2 V399.5" fill="none" stroke="#3a3a3a" stroke-width="2.6" stroke-linejoin="round"/>
<path d="M1336,399.5 V490 Q1336,502 1348,501.6 L1430.4,496.2 V399.5" fill="none" stroke="#d8d8d8" stroke-width="0.7" stroke-dasharray="1 1.2"/>
<path d="M1336,451.2 H1430.4" fill="none" stroke="#3a3a3a" stroke-width="2.6" stroke-linejoin="round"/>
<path d="M1336,451.2 H1430.4" fill="none" stroke="#d8d8d8" stroke-width="0.7" stroke-dasharray="1 1.2"/>
<path d="M1430,495.6 L1572,484.8 M1585,484 L1595.7,483.6 M1595.7,399.5 V484 M1605,482.5 L1622.3,481.4 Q1640,456 1666.7,455.2 Q1695,456 1712,478 L1737.3,484.5 M1737.3,399.5 V484.5" fill="none" stroke="#3a3a3a" stroke-width="2.6" stroke-linejoin="round"/>
<path d="M1430,495.6 L1572,484.8 M1585,484 L1595.7,483.6 M1595.7,399.5 V484 M1605,482.5 L1622.3,481.4 Q1640,456 1666.7,455.2 Q1695,456 1712,478 L1737.3,484.5 M1737.3,399.5 V484.5" fill="none" stroke="#d8d8d8" stroke-width="0.7" stroke-dasharray="1 1.2"/>
<path d="M1666.3,399.5 V455" fill="none" stroke="#3a3a3a" stroke-width="2.6" stroke-linejoin="round"/>
<path d="M1666.3,399.5 V455" fill="none" stroke="#d8d8d8" stroke-width="0.7" stroke-dasharray="1 1.2"/>
<path d="M1748,485.5 L1808.2,490.5 M1808.2,399.5 V490.5 M1822,491.5 L1902.5,497 M1902.5,399.5 V497 M1902.5,451.2 H1928 M1910,498 L1928,499" fill="none" stroke="#3a3a3a" stroke-width="2.6" stroke-linejoin="round"/>
<path d="M1748,485.5 L1808.2,490.5 M1808.2,399.5 V490.5 M1822,491.5 L1902.5,497 M1902.5,399.5 V497 M1902.5,451.2 H1928 M1910,498 L1928,499" fill="none" stroke="#d8d8d8" stroke-width="0.7" stroke-dasharray="1 1.2"/>
<path d="M1107,521 L1200,513.5" stroke="#222" stroke-width="1" fill="none"/>
<path d="M1288,507 L1345,503.5" stroke="#333" stroke-width="0.9" stroke-dasharray="1.2 1.2" fill="none"/>
<path d="M1102,726 L1200,732" stroke="#222" stroke-width="1" fill="none"/>
<rect x="1191.8999999999999" y="436.7" width="4.4" height="29" fill="#fff"/>
<path d="M1194.1,435.2 A16,16 0 0 1 1194.1,467.2" fill="none" stroke="#333" stroke-width="0.9"/>
<path d="M1194.1,449.2 h15.2 M1194.1,453.2 h15.2" stroke="#222" stroke-width="1.2"/>
<circle cx="1194.1" cy="442.2" r="4.6" fill="#fff" stroke="#333" stroke-width="0.8"/>
<circle cx="1194.1" cy="460.2" r="4.6" fill="#fff" stroke="#333" stroke-width="0.8"/>
<rect x="1286.3999999999999" y="436.7" width="4.4" height="29" fill="#fff"/>
<path d="M1288.6,435.2 A16,16 0 0 0 1288.6,467.2" fill="none" stroke="#333" stroke-width="0.9"/>
<path d="M1288.6,449.2 h-15.2 M1288.6,453.2 h-15.2" stroke="#222" stroke-width="1.2"/>
<circle cx="1288.6" cy="442.2" r="4.6" fill="#fff" stroke="#333" stroke-width="0.8"/>
<circle cx="1288.6" cy="460.2" r="4.6" fill="#fff" stroke="#333" stroke-width="0.8"/>
<rect x="1333.8" y="436.7" width="4.4" height="29" fill="#fff"/>
<path d="M1336,435.2 A16,16 0 0 1 1336,467.2" fill="none" stroke="#333" stroke-width="0.9"/>
<path d="M1336,449.2 h15.2 M1336,453.2 h15.2" stroke="#222" stroke-width="1.2"/>
<circle cx="1336" cy="442.2" r="4.6" fill="#fff" stroke="#333" stroke-width="0.8"/>
<circle cx="1336" cy="460.2" r="4.6" fill="#fff" stroke="#333" stroke-width="0.8"/>
<rect x="1286.3" y="772.8" width="4.4" height="31" fill="#fff"/>
<path d="M1288.5,771.3 A17,17 0 0 0 1288.5,805.3" fill="none" stroke="#333" stroke-width="0.9"/>
<path d="M1288.5,786.3 h-16.15 M1288.5,790.3 h-16.15" stroke="#222" stroke-width="1.2"/>
<circle cx="1288.5" cy="779.3" r="4.6" fill="#fff" stroke="#333" stroke-width="0.8"/>
<circle cx="1288.5" cy="797.3" r="4.6" fill="#fff" stroke="#333" stroke-width="0.8"/>
<rect x="1333.3" y="783.3" width="4.4" height="29" fill="#fff"/>
<path d="M1335.5,781.8 A16,16 0 0 1 1335.5,813.8" fill="none" stroke="#333" stroke-width="0.9"/>
<path d="M1335.5,795.8 h15.2 M1335.5,799.8 h15.2" stroke="#222" stroke-width="1.2"/>
<circle cx="1335.5" cy="788.8" r="4.6" fill="#fff" stroke="#333" stroke-width="0.8"/>
<circle cx="1335.5" cy="806.8" r="4.6" fill="#fff" stroke="#333" stroke-width="0.8"/>
<rect x="1428.1" y="783.3" width="4.4" height="29" fill="#fff"/>
<path d="M1430.3,781.8 A16,16 0 0 0 1430.3,813.8" fill="none" stroke="#333" stroke-width="0.9"/>
<path d="M1430.3,795.8 h-15.2 M1430.3,799.8 h-15.2" stroke="#222" stroke-width="1.2"/>
<circle cx="1430.3" cy="788.8" r="4.6" fill="#fff" stroke="#333" stroke-width="0.8"/>
<circle cx="1430.3" cy="806.8" r="4.6" fill="#fff" stroke="#333" stroke-width="0.8"/>
<rect x="1474.8" y="782.7" width="4.4" height="29" fill="#fff"/>
<path d="M1477,781.2 A16,16 0 0 1 1477,813.2" fill="none" stroke="#333" stroke-width="0.9"/>
<path d="M1477,795.2 h15.2 M1477,799.2 h15.2" stroke="#222" stroke-width="1.2"/>
<circle cx="1477" cy="788.2" r="4.6" fill="#fff" stroke="#333" stroke-width="0.8"/>
<circle cx="1477" cy="806.2" r="4.6" fill="#fff" stroke="#333" stroke-width="0.8"/>
<rect x="1569.3" y="782.7" width="4.4" height="29" fill="#fff"/>
<path d="M1571.5,781.2 A16,16 0 0 0 1571.5,813.2" fill="none" stroke="#333" stroke-width="0.9"/>
<path d="M1571.5,795.2 h-15.2 M1571.5,799.2 h-15.2" stroke="#222" stroke-width="1.2"/>
<circle cx="1571.5" cy="788.2" r="4.6" fill="#fff" stroke="#333" stroke-width="0.8"/>
<circle cx="1571.5" cy="806.2" r="4.6" fill="#fff" stroke="#333" stroke-width="0.8"/>
<rect x="1758.6" y="782.7" width="4.4" height="29" fill="#fff"/>
<path d="M1760.8,781.2 A16,16 0 0 1 1760.8,813.2" fill="none" stroke="#333" stroke-width="0.9"/>
<path d="M1760.8,795.2 h15.2 M1760.8,799.2 h15.2" stroke="#222" stroke-width="1.2"/>
<circle cx="1760.8" cy="788.2" r="4.6" fill="#fff" stroke="#333" stroke-width="0.8"/>
<circle cx="1760.8" cy="806.2" r="4.6" fill="#fff" stroke="#333" stroke-width="0.8"/>
<rect x="1853.0" y="782.7" width="4.4" height="29" fill="#fff"/>
<path d="M1855.2,781.2 A16,16 0 0 0 1855.2,813.2" fill="none" stroke="#333" stroke-width="0.9"/>
<path d="M1855.2,795.2 h-15.2 M1855.2,799.2 h-15.2" stroke="#222" stroke-width="1.2"/>
<circle cx="1855.2" cy="788.2" r="4.6" fill="#fff" stroke="#333" stroke-width="0.8"/>
<circle cx="1855.2" cy="806.2" r="4.6" fill="#fff" stroke="#333" stroke-width="0.8"/>
<rect x="1899.3999999999999" y="782.7" width="4.4" height="29" fill="#fff"/>
<path d="M1901.6,781.2 A16,16 0 0 1 1901.6,813.2" fill="none" stroke="#333" stroke-width="0.9"/>
<path d="M1901.6,795.2 h15.2 M1901.6,799.2 h15.2" stroke="#222" stroke-width="1.2"/>
<circle cx="1901.6" cy="788.2" r="4.6" fill="#fff" stroke="#333" stroke-width="0.8"/>
<circle cx="1901.6" cy="806.2" r="4.6" fill="#fff" stroke="#333" stroke-width="0.8"/>
<rect x="1381.7" y="610.9" width="4.4" height="25" fill="#b4c6dc"/>
<path d="M1383.9,609.4 A14,14 0 0 1 1383.9,637.4" fill="none" stroke="#333" stroke-width="0.9"/>
<path d="M1383.9,621.4 h13.299999999999999 M1383.9,625.4 h13.299999999999999" stroke="#222" stroke-width="1.2"/>
<circle cx="1383.9" cy="614.4" r="4.6" fill="#fff" stroke="#333" stroke-width="0.8"/>
<circle cx="1383.9" cy="632.4" r="4.6" fill="#fff" stroke="#333" stroke-width="0.8"/>
<path d="M1439,495 v-14 q12,2 12,13" fill="none" stroke="#333" stroke-width="0.9"/>
<circle cx="1444" cy="496" r="4.3" fill="#fff" stroke="#333" stroke-width="0.8"/>
<path d="M1584,484 v-14 q-12,2 -12,13" fill="none" stroke="#333" stroke-width="0.9"/>
<circle cx="1579" cy="485" r="4.3" fill="#fff" stroke="#333" stroke-width="0.8"/>
<path d="M1598,484 v-14 q12,2 12,13" fill="none" stroke="#333" stroke-width="0.9"/>
<circle cx="1603" cy="485" r="4.3" fill="#fff" stroke="#333" stroke-width="0.8"/>
<path d="M1727,484 v-14 q-12,2 -12,13" fill="none" stroke="#333" stroke-width="0.9"/>
<circle cx="1722" cy="485" r="4.3" fill="#fff" stroke="#333" stroke-width="0.8"/>
<path d="M1742,485 v-14 q12,2 12,13" fill="none" stroke="#333" stroke-width="0.9"/>
<circle cx="1747" cy="486" r="4.3" fill="#fff" stroke="#333" stroke-width="0.8"/>
<path d="M1812,491 v-14 q12,2 12,13" fill="none" stroke="#333" stroke-width="0.9"/>
<circle cx="1817" cy="492" r="4.3" fill="#fff" stroke="#333" stroke-width="0.8"/>
<path d="M1908,498 v-14 q-12,2 -12,13" fill="none" stroke="#333" stroke-width="0.9"/>
<circle cx="1903" cy="499" r="4.3" fill="#fff" stroke="#333" stroke-width="0.8"/>
<path d="M1194,847.2 V746 Q1194,734 1206,734 L1276,738.5 Q1288.5,739.5 1288.5,752 V847.2" fill="none" stroke="#3a3a3a" stroke-width="2.6" stroke-linejoin="round"/>
<path d="M1194,847.2 V746 Q1194,734 1206,734 L1276,738.5 Q1288.5,739.5 1288.5,752 V847.2" fill="none" stroke="#d8d8d8" stroke-width="0.7" stroke-dasharray="1 1.2"/>
<path d="M1194,788.3 H1288.5" fill="none" stroke="#3a3a3a" stroke-width="2.6" stroke-linejoin="round"/>
<path d="M1194,788.3 H1288.5" fill="none" stroke="#d8d8d8" stroke-width="0.7" stroke-dasharray="1 1.2"/>
<path d="M1335.5,847.2 V756 Q1335.5,744 1347,744.4 L1418,749 Q1430.3,749.5 1430.3,761 V847.2 M1382.5,745.5 V847.2 M1335.5,797.8 H1430.3" fill="none" stroke="#3a3a3a" stroke-width="2.6" stroke-linejoin="round"/>
<path d="M1335.5,847.2 V756 Q1335.5,744 1347,744.4 L1418,749 Q1430.3,749.5 1430.3,761 V847.2 M1382.5,745.5 V847.2 M1335.5,797.8 H1430.3" fill="none" stroke="#d8d8d8" stroke-width="0.7" stroke-dasharray="1 1.2"/>
<path d="M1477,847.2 V766 Q1477,754.7 1489,754.7 L1560,759.5 Q1571.5,760 1571.5,772 V847.2 M1524.5,757 V847.2 M1477,797.2 H1571.5" fill="none" stroke="#3a3a3a" stroke-width="2.6" stroke-linejoin="round"/>
<path d="M1477,847.2 V766 Q1477,754.7 1489,754.7 L1560,759.5 Q1571.5,760 1571.5,772 V847.2 M1524.5,757 V847.2 M1477,797.2 H1571.5" fill="none" stroke="#d8d8d8" stroke-width="0.7" stroke-dasharray="1 1.2"/>
<path d="M1760.8,847.2 V771 Q1760.8,760.5 1772,760 L1843,754 Q1855.2,753.5 1855.2,765 V847.2 M1808.1,757 V847.2 M1760.8,797.2 H1855.2" fill="none" stroke="#3a3a3a" stroke-width="2.6" stroke-linejoin="round"/>
<path d="M1760.8,847.2 V771 Q1760.8,760.5 1772,760 L1843,754 Q1855.2,753.5 1855.2,765 V847.2 M1808.1,757 V847.2 M1760.8,797.2 H1855.2" fill="none" stroke="#d8d8d8" stroke-width="0.7" stroke-dasharray="1 1.2"/>
<path d="M1901.6,847.2 V762 Q1901.6,749.5 1914,749.5 L1928,749.5 M1901.6,797.2 H1928" fill="none" stroke="#3a3a3a" stroke-width="2.6" stroke-linejoin="round"/>
<path d="M1901.6,847.2 V762 Q1901.6,749.5 1914,749.5 L1928,749.5 M1901.6,797.2 H1928" fill="none" stroke="#d8d8d8" stroke-width="0.7" stroke-dasharray="1 1.2"/>
<path d="M1288,739 L1345,744 M1430,749.5 L1477,752 M1571,760 L1595,762 M1737,762 L1760,756 M1855,758 L1901,752" stroke="#333" stroke-width="0.9" stroke-dasharray="1.2 1.2" fill="none"/>
<rect x="1569" y="751.5" width="196" height="107" rx="5" fill="none" stroke="#333" stroke-width="0.9" stroke-dasharray="3 2"/>
<path d="M1595.4,783.7 V763 L1666,770 L1737.2,763 V783.7 H1595.4" fill="none" stroke="#3a3a3a" stroke-width="2" stroke-linejoin="round"/>
<path d="M1595.4,783.7 V763 L1666,770 L1737.2,763 V783.7 H1595.4" fill="none" stroke="#d8d8d8" stroke-width="0.7" stroke-dasharray="1 1.2"/>
<rect x="1600" y="774" width="130" height="8" fill="none" stroke="#333" stroke-width="0.8"/>
<rect x="1623" y="790" width="87" height="28" fill="none" stroke="#333" stroke-width="0.9" stroke-dasharray="2 1.5"/>
<rect x="1628" y="795" width="77" height="18" fill="none" stroke="#333" stroke-width="0.8"/>
<rect x="1589" y="829.5" width="154.7" height="13.5" fill="none" stroke="#333" stroke-width="1.2"/>
<path d="M1589,829.5 h12 v13.5 M1731.7,829.5 v13.5" fill="none" stroke="#333" stroke-width="1"/>
<circle cx="1778.5" cy="876.2" r="9" fill="#fff" stroke="#333" stroke-width="0.9"/><path d="M1769.5,876.2 h18 M1765,858 l5,10" stroke="#333" stroke-width="0.8"/>
<path d="M1455,531.8 H1470 Q1476.3,531.8 1476.3,538 V546 L1520.4,546 V540 Q1520.4,536.4 1526,536.6 L1622,545 Q1639.8,547 1639.8,565 V690 Q1639.8,703 1622,704 L1526,711 Q1520.4,711.5 1520.4,706 V700 L1476.3,700 V708 Q1476.3,714 1470,714 H1455 Q1448.3,714 1448.3,706 V539 Q1448.3,531.8 1455,531.8 Z" fill="none" stroke="#3a3a3a" stroke-width="2.2" stroke-linejoin="round"/>
<path d="M1455,531.8 H1470 Q1476.3,531.8 1476.3,538 V546 L1520.4,546 V540 Q1520.4,536.4 1526,536.6 L1622,545 Q1639.8,547 1639.8,565 V690 Q1639.8,703 1622,704 L1526,711 Q1520.4,711.5 1520.4,706 V700 L1476.3,700 V708 Q1476.3,714 1470,714 H1455 Q1448.3,714 1448.3,706 V539 Q1448.3,531.8 1455,531.8 Z" fill="none" stroke="#d8d8d8" stroke-width="0.7" stroke-dasharray="1 1.2"/>
<path d="M1458.7,547.7 H1637 M1458.7,699.9 H1637 M1458.7,547.7 V699.9 M1458.7,635.9 H1600.8 M1600.8,648.5 H1637" fill="none" stroke="#3a3a3a" stroke-width="2.2" stroke-linejoin="round"/>
<path d="M1458.7,547.7 H1637 M1458.7,699.9 H1637 M1458.7,547.7 V699.9 M1458.7,635.9 H1600.8 M1600.8,648.5 H1637" fill="none" stroke="#d8d8d8" stroke-width="0.7" stroke-dasharray="1 1.2"/>
<path d="M1497,547.7 V699.9" stroke="#333" stroke-width="3"/>
<path d="M1497,596 H1549 V560 M1578.4,547.7 V635.9 M1600.8,547.7 V699.9 M1514,635.9 V670 H1530 V650 M1560,650 V700" fill="none" stroke="#3a3a3a" stroke-width="1.8" stroke-linejoin="round"/>
<path d="M1497,596 H1549 V560 M1578.4,547.7 V635.9 M1600.8,547.7 V699.9 M1514,635.9 V670 H1530 V650 M1560,650 V700" fill="none" stroke="#d8d8d8" stroke-width="0.7" stroke-dasharray="1 1.2"/>
<rect x="1461" y="586.6" width="36" height="36" fill="#fff" stroke="#333" stroke-width="0.8"/>
<path d="M1462,588 h14 M1482,588 h14" stroke="#222" stroke-width="1.4" stroke-dasharray="1.5 1"/>
<path d="M1462,592 h14 M1482,592 h14" stroke="#222" stroke-width="1.4" stroke-dasharray="1.5 1"/>
<path d="M1462,596 h14 M1482,596 h14" stroke="#222" stroke-width="1.4" stroke-dasharray="1.5 1"/>
<path d="M1462,600 h14 M1482,600 h14" stroke="#222" stroke-width="1.4" stroke-dasharray="1.5 1"/>
<path d="M1462,604 h14 M1482,604 h14" stroke="#222" stroke-width="1.4" stroke-dasharray="1.5 1"/>
<path d="M1462,608 h14 M1482,608 h14" stroke="#222" stroke-width="1.4" stroke-dasharray="1.5 1"/>
<path d="M1462,612 h14 M1482,612 h14" stroke="#222" stroke-width="1.4" stroke-dasharray="1.5 1"/>
<path d="M1462,616 h14 M1482,616 h14" stroke="#222" stroke-width="1.4" stroke-dasharray="1.5 1"/>
<path d="M1462,620 h14 M1482,620 h14" stroke="#222" stroke-width="1.4" stroke-dasharray="1.5 1"/>
<path d="M1579,549 L1600,634 M1600,549 L1579,634" stroke="#444" stroke-width="0.7"/>
<rect x="1605" y="563" width="30" height="38" fill="none" stroke="#4a6a3a" stroke-width="1.1"/><path d="M1605,563 L1635,601 M1635,563 L1605,601" stroke="#4a6a3a" stroke-width="0.8"/>
<rect x="1605" y="604" width="30" height="40" fill="none" stroke="#4a6a3a" stroke-width="1.1"/><path d="M1605,604 L1635,644 M1635,604 L1605,644" stroke="#4a6a3a" stroke-width="0.8"/>
<rect x="1603.4" y="559.8" width="34.6" height="88" fill="none" stroke="#e8202a" stroke-width="1" stroke-dasharray="2 2"/>
<rect x="1610" y="666" width="26" height="18" fill="none" stroke="#333" stroke-width="0.9"/><path d="M1610,684 L1636,666 M1610,666 L1636,684" stroke="#333" stroke-width="0.6"/>
<rect x="1622" y="650" width="13" height="12" fill="none" stroke="#333" stroke-width="0.9"/><path d="M1622,662 L1635,650" stroke="#333" stroke-width="0.6"/>
<circle cx="1537" cy="644" r="2.6" fill="#555" stroke="#222" stroke-width="0.8"/>
<circle cx="1552" cy="644" r="2.6" fill="#555" stroke="#222" stroke-width="0.8"/>
<circle cx="1566" cy="644" r="2.6" fill="#555" stroke="#222" stroke-width="0.8"/>
<circle cx="1594" cy="644" r="2.6" fill="#555" stroke="#222" stroke-width="0.8"/>
<path d="M1505,682 h30 M1558,682 h30" stroke="#333" stroke-width="0.8"/>
<rect x="1539" y="690" width="8" height="5" fill="none" stroke="#222" stroke-width="1.2"/><rect x="1556" y="690" width="8" height="5" fill="none" stroke="#222" stroke-width="1.2"/>
<rect x="1462" y="682" width="9" height="9" fill="none" stroke="#222" stroke-width="1.4"/>
<circle cx="1488" cy="551" r="4.3" fill="#fff" stroke="#333" stroke-width="0.8"/>
<circle cx="1506" cy="551" r="4.3" fill="#fff" stroke="#333" stroke-width="0.8"/>
<circle cx="1552" cy="556" r="4.3" fill="#fff" stroke="#333" stroke-width="0.8"/>
<circle cx="1488" cy="697" r="4.3" fill="#fff" stroke="#333" stroke-width="0.8"/>
<circle cx="1506" cy="697" r="4.3" fill="#fff" stroke="#333" stroke-width="0.8"/>
<circle cx="1508" cy="668" r="4.3" fill="#fff" stroke="#333" stroke-width="0.8"/>
<circle cx="1581" cy="676" r="4.3" fill="#fff" stroke="#333" stroke-width="0.8"/>
<path d="M1457.7,719.9 L1630,705" stroke="#333" stroke-width="0.8" stroke-dasharray="1.5 1.5"/>
<path d="M1455,531 L1630,545" stroke="#333" stroke-width="0.8" stroke-dasharray="1.5 1.5"/>
<circle cx="1627.7" cy="722.4" r="9.5" fill="#fff" stroke="#333" stroke-width="0.9"/><path d="M1618.2,722.4 h19 M1610,705 l8,17" stroke="#333" stroke-width="0.8"/>
<path d="M1700,545 Q1693,548 1693,560 V690 Q1693,700 1705,701 L1805,710 Q1811.5,710.5 1811.5,705 V699 L1857.3,699 V708 Q1857.3,716 1866,716 H1876 Q1884,716 1884,706 V540 Q1884,532 1876,532 H1866 Q1857.3,532 1857.3,540 V548 L1811.5,548 V542 Q1811.5,535.6 1805,536 L1715,543.4 Q1704,544 1700,545 Z" fill="none" stroke="#3a3a3a" stroke-width="2.2" stroke-linejoin="round"/>
<path d="M1700,545 Q1693,548 1693,560 V690 Q1693,700 1705,701 L1805,710 Q1811.5,710.5 1811.5,705 V699 L1857.3,699 V708 Q1857.3,716 1866,716 H1876 Q1884,716 1884,706 V540 Q1884,532 1876,532 H1866 Q1857.3,532 1857.3,540 V548 L1811.5,548 V542 Q1811.5,535.6 1805,536 L1715,543.4 Q1704,544 1700,545 Z" fill="none" stroke="#d8d8d8" stroke-width="0.7" stroke-dasharray="1 1.2"/>
<path d="M1695.6,547.7 H1873.7 M1695.6,699 H1873.7 M1873.7,547.7 V699 M1695.6,547.7 V699" fill="none" stroke="#3a3a3a" stroke-width="2.2" stroke-linejoin="round"/>
<path d="M1695.6,547.7 H1873.7 M1695.6,699 H1873.7 M1873.7,547.7 V699 M1695.6,547.7 V699" fill="none" stroke="#d8d8d8" stroke-width="0.7" stroke-dasharray="1 1.2"/>
<path d="M1731.9,547.7 V699" stroke="#333" stroke-width="3"/>
<path d="M1732,636.8 H1834 M1834,547.7 V699 M1834,610 H1873.7 M1834,612 H1873.7 M1695.6,645 H1731.9 M1758,636.8 V663 H1748 M1803,636.8 V664 H1834" fill="none" stroke="#3a3a3a" stroke-width="1.8" stroke-linejoin="round"/>
<path d="M1732,636.8 H1834 M1834,547.7 V699 M1834,610 H1873.7 M1834,612 H1873.7 M1695.6,645 H1731.9 M1758,636.8 V663 H1748 M1803,636.8 V664 H1834" fill="none" stroke="#d8d8d8" stroke-width="0.7" stroke-dasharray="1 1.2"/>
<rect x="1697.3" y="562.9" width="28.5" height="37.5" fill="#fdf5a0" stroke="#e8202a" stroke-width="1.4"/><path d="M1697.3,562.9 L1725.8,600.4 M1725.8,562.9 L1697.3,600.4" stroke="#8a8a40" stroke-width="0.6"/>
<rect x="1697.3" y="604.4" width="28.5" height="38.4" fill="none" stroke="#333" stroke-width="1"/><path d="M1697.3,604.4 L1725.8,642.8 M1725.8,604.4 L1697.3,642.8" stroke="#333" stroke-width="0.6"/>
<rect x="1699" y="663.6" width="24" height="20" fill="none" stroke="#333" stroke-width="1"/><path d="M1699,683.6 L1723,663.6" stroke="#333" stroke-width="0.6"/>
<path d="M1780.7,561.7 A4.7,4.7 0 0 1 1788.5,562.7 A4.7,4.7 0 0 1 1795.7,565.7 A4.7,4.7 0 0 1 1801.9,570.5 A4.7,4.7 0 0 1 1806.7,576.7 A4.7,4.7 0 0 1 1809.7,583.9 A4.7,4.7 0 0 1 1810.7,591.7 A4.7,4.7 0 0 1 1809.7,599.5 A4.7,4.7 0 0 1 1806.7,606.7 A4.7,4.7 0 0 1 1801.9,612.9 A4.7,4.7 0 0 1 1795.7,617.7 A4.7,4.7 0 0 1 1788.5,620.7 A4.7,4.7 0 0 1 1780.7,621.7 A4.7,4.7 0 0 1 1772.9,620.7 A4.7,4.7 0 0 1 1765.7,617.7 A4.7,4.7 0 0 1 1759.5,612.9 A4.7,4.7 0 0 1 1754.7,606.7 A4.7,4.7 0 0 1 1751.7,599.5 A4.7,4.7 0 0 1 1750.7,591.7 A4.7,4.7 0 0 1 1751.7,583.9 A4.7,4.7 0 0 1 1754.7,576.7 A4.7,4.7 0 0 1 1759.5,570.5 A4.7,4.7 0 0 1 1765.7,565.7 A4.7,4.7 0 0 1 1772.9,562.7 A4.7,4.7 0 0 1 1780.7,561.7z" fill="none" stroke="none"/>
<rect x="1737" y="561.5" width="87.4" height="60.5" rx="4" fill="none" stroke="#e8202a" stroke-width="1" stroke-dasharray="2.5 1.5"/>
<rect x="1745" y="566" width="22" height="52" fill="none" stroke="#5a3a3a" stroke-width="0.8"/>
<path d="M1752,566 v52 M1760,566 v52 M1745,584 h22 M1745,601 h22" stroke="#5a3a3a" stroke-width="0.6"/>
<rect x="1773" y="566" width="22" height="52" fill="none" stroke="#5a3a3a" stroke-width="0.8"/>
<path d="M1780,566 v52 M1788,566 v52 M1773,584 h22 M1773,601 h22" stroke="#5a3a3a" stroke-width="0.6"/>
<rect x="1801" y="566" width="22" height="52" fill="none" stroke="#5a3a3a" stroke-width="0.8"/>
<path d="M1808,566 v52 M1816,566 v52 M1801,584 h22 M1801,601 h22" stroke="#5a3a3a" stroke-width="0.6"/>
<rect x="1839" y="614" width="33" height="46" fill="#fff" stroke="#333" stroke-width="0.8"/>
<path d="M1840,616 h13 M1857,616 h14" stroke="#222" stroke-width="1.4" stroke-dasharray="1.5 1"/>
<path d="M1840,620 h13 M1857,620 h14" stroke="#222" stroke-width="1.4" stroke-dasharray="1.5 1"/>
<path d="M1840,624 h13 M1857,624 h14" stroke="#222" stroke-width="1.4" stroke-dasharray="1.5 1"/>
<path d="M1840,628 h13 M1857,628 h14" stroke="#222" stroke-width="1.4" stroke-dasharray="1.5 1"/>
<path d="M1840,632 h13 M1857,632 h14" stroke="#222" stroke-width="1.4" stroke-dasharray="1.5 1"/>
<path d="M1840,636 h13 M1857,636 h14" stroke="#222" stroke-width="1.4" stroke-dasharray="1.5 1"/>
<path d="M1840,640 h13 M1857,640 h14" stroke="#222" stroke-width="1.4" stroke-dasharray="1.5 1"/>
<path d="M1840,644 h13 M1857,644 h14" stroke="#222" stroke-width="1.4" stroke-dasharray="1.5 1"/>
<path d="M1840,648 h13 M1857,648 h14" stroke="#222" stroke-width="1.4" stroke-dasharray="1.5 1"/>
<path d="M1840,652 h13 M1857,652 h14" stroke="#222" stroke-width="1.4" stroke-dasharray="1.5 1"/>
<path d="M1840,656 h13 M1857,656 h14" stroke="#222" stroke-width="1.4" stroke-dasharray="1.5 1"/>
<circle cx="1740" cy="644" r="2.6" fill="#555" stroke="#222" stroke-width="0.8"/>
<circle cx="1767" cy="644" r="2.6" fill="#555" stroke="#222" stroke-width="0.8"/>
<circle cx="1780" cy="644" r="2.6" fill="#555" stroke="#222" stroke-width="0.8"/>
<circle cx="1794" cy="644" r="2.6" fill="#555" stroke="#222" stroke-width="0.8"/>
<rect x="1765" y="690" width="8" height="5" fill="none" stroke="#222" stroke-width="1.2"/><rect x="1786" y="690" width="8" height="5" fill="none" stroke="#222" stroke-width="1.2"/>
<circle cx="1824" cy="551" r="4.3" fill="#fff" stroke="#333" stroke-width="0.8"/>
<circle cx="1843" cy="551" r="4.3" fill="#fff" stroke="#333" stroke-width="0.8"/>
<circle cx="1825" cy="697" r="4.3" fill="#fff" stroke="#333" stroke-width="0.8"/>
<circle cx="1844" cy="697" r="4.3" fill="#fff" stroke="#333" stroke-width="0.8"/>
<circle cx="1751" cy="677" r="4.3" fill="#fff" stroke="#333" stroke-width="0.8"/>
<circle cx="1824" cy="670" r="4.3" fill="#fff" stroke="#333" stroke-width="0.8"/>
<path d="M1873.7,560.6 Q1884,560.6 1890,560.6 H1928 M1873.7,623.8 H1928 M1873.7,687 Q1884,687 1890,687 H1928" fill="none" stroke="#3a3a3a" stroke-width="2" stroke-linejoin="round"/>
<path d="M1873.7,560.6 Q1884,560.6 1890,560.6 H1928 M1873.7,623.8 H1928 M1873.7,687 Q1884,687 1890,687 H1928" fill="none" stroke="#d8d8d8" stroke-width="0.7" stroke-dasharray="1 1.2"/>
<path d="M1873.7,548 H1928 M1873.7,700 H1928 M1890,563 V685" stroke="#333" stroke-width="0.8" stroke-dasharray="1.5 1.5" fill="none"/>
<path d="M1811,536 L1884,531 M1811,711 L1884,716" stroke="#333" stroke-width="0.8" stroke-dasharray="1.5 1.5"/>
<path d="M1448.7,559.4 H1396 Q1383.9,559.4 1383.9,571 V676 Q1383.9,687.4 1396,687.4 H1448.7" fill="none" stroke="#3a3a3a" stroke-width="2.2" stroke-linejoin="round"/>
<path d="M1448.7,559.4 H1396 Q1383.9,559.4 1383.9,571 V676 Q1383.9,687.4 1396,687.4 H1448.7" fill="none" stroke="#d8d8d8" stroke-width="0.7" stroke-dasharray="1 1.2"/>
<path d="M1383.9,623.4 H1458" fill="none" stroke="#3a3a3a" stroke-width="1.8" stroke-linejoin="round"/>
<path d="M1383.9,623.4 H1458" fill="none" stroke="#d8d8d8" stroke-width="0.7" stroke-dasharray="1 1.2"/>
<path d="M1737.0,561.5 a3.6,3.6 0 0 1 7.3,0 M1744.3,561.5 a3.6,3.6 0 0 1 7.3,0 M1751.6,561.5 a3.6,3.6 0 0 1 7.3,0 M1758.8,561.5 a3.6,3.6 0 0 1 7.3,0 M1766.1,561.5 a3.6,3.6 0 0 1 7.3,0 M1773.4,561.5 a3.6,3.6 0 0 1 7.3,0 M1780.7,561.5 a3.6,3.6 0 0 1 7.3,0 M1788.0,561.5 a3.6,3.6 0 0 1 7.3,0 M1795.3,561.5 a3.6,3.6 0 0 1 7.3,0 M1802.5,561.5 a3.6,3.6 0 0 1 7.3,0 M1809.8,561.5 a3.6,3.6 0 0 1 7.3,0 M1817.1,561.5 a3.6,3.6 0 0 1 7.3,0 M1824.4,561.5 a3.4,3.4 0 0 1 0,6.7 M1824.4,568.2 a3.4,3.4 0 0 1 0,6.7 M1824.4,574.9 a3.4,3.4 0 0 1 0,6.7 M1824.4,581.7 a3.4,3.4 0 0 1 0,6.7 M1824.4,588.4 a3.4,3.4 0 0 1 0,6.7 M1824.4,595.1 a3.4,3.4 0 0 1 0,6.7 M1824.4,601.8 a3.4,3.4 0 0 1 0,6.7 M1824.4,608.6 a3.4,3.4 0 0 1 0,6.7 M1824.4,615.3 a3.4,3.4 0 0 1 0,6.7 M1737.0,622.0 a3.4,3.4 0 0 1 0,-6.7 M1737.0,615.3 a3.4,3.4 0 0 1 0,-6.7 M1737.0,608.6 a3.4,3.4 0 0 1 0,-6.7 M1737.0,601.8 a3.4,3.4 0 0 1 0,-6.7 M1737.0,595.1 a3.4,3.4 0 0 1 0,-6.7 M1737.0,588.4 a3.4,3.4 0 0 1 0,-6.7 M1737.0,581.7 a3.4,3.4 0 0 1 0,-6.7 M1737.0,574.9 a3.4,3.4 0 0 1 0,-6.7 M1737.0,568.2 a3.4,3.4 0 0 1 0,-6.7 M1824.4,622.0 a3.6,3.6 0 0 1 -7.3,0 M1817.1,622.0 a3.6,3.6 0 0 1 -7.3,0 M1809.8,622.0 a3.6,3.6 0 0 1 -7.3,0 M1802.6,622.0 a3.6,3.6 0 0 1 -7.3,0 M1795.3,622.0 a3.6,3.6 0 0 1 -7.3,0 M1788.0,622.0 a3.6,3.6 0 0 1 -7.3,0 M1780.7,622.0 a3.6,3.6 0 0 1 -7.3,0 M1773.4,622.0 a3.6,3.6 0 0 1 -7.3,0 M1766.1,622.0 a3.6,3.6 0 0 1 -7.3,0 M1758.9,622.0 a3.6,3.6 0 0 1 -7.3,0 M1751.6,622.0 a3.6,3.6 0 0 1 -7.3,0 M1744.3,622.0 a3.6,3.6 0 0 1 -7.3,0 " fill="none" stroke="#e8202a" stroke-width="1"/>
<path d="M1603.4,559.8 a3.45,3.45 0 0 1 6.9,0 M1610.3,559.8 a3.45,3.45 0 0 1 6.9,0 M1617.2,559.8 a3.45,3.45 0 0 1 6.9,0 M1624.1,559.8 a3.45,3.45 0 0 1 6.9,0 M1631.0,559.8 a3.45,3.45 0 0 1 6.9,0 " fill="none" stroke="#e8202a" stroke-width="1"/>
<path d="M1603.4,563 l-2,2" stroke="#e8202a" stroke-width="1"/>
<path d="M1603.4,570 l-2,2" stroke="#e8202a" stroke-width="1"/>
<path d="M1603.4,577 l-2,2" stroke="#e8202a" stroke-width="1"/>
<path d="M1603.4,584 l-2,2" stroke="#e8202a" stroke-width="1"/>
<path d="M1603.4,591 l-2,2" stroke="#e8202a" stroke-width="1"/>
<path d="M1603.4,598 l-2,2" stroke="#e8202a" stroke-width="1"/>
<path d="M1603.4,605 l-2,2" stroke="#e8202a" stroke-width="1"/>
<path d="M1603.4,612 l-2,2" stroke="#e8202a" stroke-width="1"/>
<path d="M1603.4,619 l-2,2" stroke="#e8202a" stroke-width="1"/>
<path d="M1603.4,626 l-2,2" stroke="#e8202a" stroke-width="1"/>
<path d="M1603.4,633 l-2,2" stroke="#e8202a" stroke-width="1"/>
<path d="M1603.4,640 l-2,2" stroke="#e8202a" stroke-width="1"/>
<path d="M1666.0,403 a3.55,3.55 0 0 1 7.1,0 M1673.1,403 a3.55,3.55 0 0 1 7.1,0 M1680.2,403 a3.55,3.55 0 0 1 7.1,0 M1687.3,403 a3.55,3.55 0 0 1 7.1,0 M1694.4,403 a3.55,3.55 0 0 1 7.1,0 M1701.5,403 a3.55,3.55 0 0 1 7.1,0 M1708.6,403 a3.55,3.55 0 0 1 7.1,0 M1715.7,403 a3.55,3.55 0 0 1 7.1,0 M1722.8,403 a3.55,3.55 0 0 1 7.1,0 M1729.9,403 a3.55,3.55 0 0 1 7.1,0 M1739.5,403.0 a3.5,3.5 0 0 1 0,7 M1739.5,410.0 a3.5,3.5 0 0 1 0,7 M1739.5,417.0 a3.5,3.5 0 0 1 0,7 M1739.5,424.0 a3.5,3.5 0 0 1 0,7 M1739.5,431.0 a3.5,3.5 0 0 1 0,7 M1739.5,438.0 a3.5,3.5 0 0 1 0,7 M1739.5,445.0 a3.5,3.5 0 0 1 0,7 M1739.5,452.0 a3.5,3.5 0 0 1 0,7 M1739.5,459.0 a3.5,3.5 0 0 1 0,7 M1739.5,466.0 a3.5,3.5 0 0 1 0,7 M1739.5,473.0 a3.5,3.5 0 0 1 0,7 M1739.5,480.0 a3.5,3.5 0 0 1 0,7 M1664,403.0 a3.5,3.5 0 0 0 0,7 M1664,410.0 a3.5,3.5 0 0 0 0,7 M1664,417.0 a3.5,3.5 0 0 0 0,7 M1664,424.0 a3.5,3.5 0 0 0 0,7 M1664,431.0 a3.5,3.5 0 0 0 0,7 M1664,438.0 a3.5,3.5 0 0 0 0,7 M1664,445.0 a3.5,3.5 0 0 0 0,7 M1664,452.0 a3.5,3.5 0 0 0 0,7 " fill="none" stroke="#e8202a" stroke-width="1"/>
<path d="M1666,455 Q1695,456 1712,478 L1737,486" fill="none" stroke="#e8202a" stroke-width="1" stroke-dasharray="3 2"/>
<path d="M1666.7,462 v6" stroke="#e8202a" stroke-width="1"/>
<rect x="1607.2" y="414.9" width="47.4" height="24.6" fill="none" stroke="#333" stroke-width="0.9" stroke-dasharray="1.8 1.4"/>
<rect x="1668" y="415" width="57.6" height="23.8" fill="none" stroke="#333" stroke-width="0.9" stroke-dasharray="1.8 1.4"/>
<rect x="1760.5" y="413.8" width="24.1" height="57.7" fill="none" stroke="#333" stroke-width="0.9" stroke-dasharray="1.8 1.4"/>
<rect x="1826.2" y="426.2" width="58.2" height="33.1" fill="none" stroke="#333" stroke-width="0.9" stroke-dasharray="1.8 1.4"/>
<rect x="1473" y="579" width="21" height="36" fill="none" stroke="#333" stroke-width="0.9" stroke-dasharray="1.8 1.4"/>
<rect x="1500" y="579" width="46" height="16" fill="none" stroke="#333" stroke-width="0.8" stroke-dasharray="1.5 1.2"/>
<path d="M1642.5,482.8 H1690.2 Q1685,495 1666,495 Q1648,495 1642.5,482.8 Z" fill="none" stroke="#333" stroke-width="1"/>
<path d="M1018.5,527 V719 M1018.5,576.4 H1107 M1018.5,670.8 H1107" fill="none" stroke="#3a3a3a" stroke-width="2.2" stroke-linejoin="round"/>
<path d="M1018.5,527 V719 M1018.5,576.4 H1107 M1018.5,670.8 H1107" fill="none" stroke="#d8d8d8" stroke-width="0.7" stroke-dasharray="1 1.2"/>
<rect x="1105.0" y="563.9" width="4.4" height="25" fill="#fff"/>
<path d="M1107.2,562.4 A14,14 0 0 0 1107.2,590.4" fill="none" stroke="#333" stroke-width="0.9"/>
<path d="M1107.2,574.4 h-13.299999999999999 M1107.2,578.4 h-13.299999999999999" stroke="#222" stroke-width="1.2"/>
<circle cx="1107.2" cy="567.4" r="4.6" fill="#fff" stroke="#333" stroke-width="0.8"/>
<circle cx="1107.2" cy="585.4" r="4.6" fill="#fff" stroke="#333" stroke-width="0.8"/>
<rect x="1105.0" y="658.3" width="4.4" height="25" fill="#fff"/>
<path d="M1107.2,656.8 A14,14 0 0 0 1107.2,684.8" fill="none" stroke="#333" stroke-width="0.9"/>
<path d="M1107.2,668.8 h-13.299999999999999 M1107.2,672.8 h-13.299999999999999" stroke="#222" stroke-width="1.2"/>
<circle cx="1107.2" cy="661.8" r="4.6" fill="#fff" stroke="#333" stroke-width="0.8"/>
<circle cx="1107.2" cy="679.8" r="4.6" fill="#fff" stroke="#333" stroke-width="0.8"/>
<rect x="1043" y="588" width="37.8" height="71.4" fill="none" stroke="#333" stroke-width="1"/>
<path d="M1018.5,527.9 L1099,521.7 L1107.2,533 L1107.2,714.2 L1096.6,725.5 L1018.5,718.9 Z" fill="#a380b8" fill-opacity="0.5"/>
<path d="M1021.0,527.3 a3.3,3.3 0 0 1 6.6,-0.5 M1027.6,526.8 a3.3,3.3 0 0 1 6.6,-0.5 M1034.2,526.3 a3.3,3.3 0 0 1 6.6,-0.5 M1040.8,525.8 a3.3,3.3 0 0 1 6.6,-0.5 M1047.4,525.3 a3.3,3.3 0 0 1 6.6,-0.5 M1054.0,524.8 a3.3,3.3 0 0 1 6.6,-0.5 M1060.6,524.3 a3.3,3.3 0 0 1 6.6,-0.5 M1067.2,523.7 a3.3,3.3 0 0 1 6.6,-0.5 M1073.8,523.2 a3.3,3.3 0 0 1 6.6,-0.5 M1080.4,522.7 a3.3,3.3 0 0 1 6.6,-0.5 M1087.0,522.2 a3.3,3.3 0 0 1 6.6,-0.5 M1093.6,521.7 a3.3,3.3 0 0 1 6.6,-0.5 M1021.0,719.7 a3.3,3.3 0 0 0 6.6,0.5 M1027.6,720.3 a3.3,3.3 0 0 0 6.6,0.5 M1034.2,720.8 a3.3,3.3 0 0 0 6.6,0.5 M1040.8,721.4 a3.3,3.3 0 0 0 6.6,0.5 M1047.4,721.9 a3.3,3.3 0 0 0 6.6,0.5 M1054.0,722.5 a3.3,3.3 0 0 0 6.6,0.5 M1060.6,723.1 a3.3,3.3 0 0 0 6.6,0.5 M1067.2,723.6 a3.3,3.3 0 0 0 6.6,0.5 M1073.8,724.2 a3.3,3.3 0 0 0 6.6,0.5 M1080.4,724.7 a3.3,3.3 0 0 0 6.6,0.5 M1087.0,725.3 a3.3,3.3 0 0 0 6.6,0.5 M1093.6,725.9 a3.3,3.3 0 0 0 6.6,0.5 M1108,533.0 a3.25,3.25 0 0 1 0,6.5 M1017,527.0 a3.25,3.25 0 0 0 0,6.5 M1108,539.5 a3.25,3.25 0 0 1 0,6.5 M1017,533.5 a3.25,3.25 0 0 0 0,6.5 M1108,546.0 a3.25,3.25 0 0 1 0,6.5 M1017,540.0 a3.25,3.25 0 0 0 0,6.5 M1108,552.5 a3.25,3.25 0 0 1 0,6.5 M1017,546.5 a3.25,3.25 0 0 0 0,6.5 M1108,559.0 a3.25,3.25 0 0 1 0,6.5 M1017,553.0 a3.25,3.25 0 0 0 0,6.5 M1108,565.5 a3.25,3.25 0 0 1 0,6.5 M1017,559.5 a3.25,3.25 0 0 0 0,6.5 M1108,572.0 a3.25,3.25 0 0 1 0,6.5 M1017,566.0 a3.25,3.25 0 0 0 0,6.5 M1108,578.5 a3.25,3.25 0 0 1 0,6.5 M1017,572.5 a3.25,3.25 0 0 0 0,6.5 M1108,585.0 a3.25,3.25 0 0 1 0,6.5 M1017,579.0 a3.25,3.25 0 0 0 0,6.5 M1108,591.5 a3.25,3.25 0 0 1 0,6.5 M1017,585.5 a3.25,3.25 0 0 0 0,6.5 M1108,598.0 a3.25,3.25 0 0 1 0,6.5 M1017,592.0 a3.25,3.25 0 0 0 0,6.5 M1108,604.5 a3.25,3.25 0 0 1 0,6.5 M1017,598.5 a3.25,3.25 0 0 0 0,6.5 M1108,611.0 a3.25,3.25 0 0 1 0,6.5 M1017,605.0 a3.25,3.25 0 0 0 0,6.5 M1108,617.5 a3.25,3.25 0 0 1 0,6.5 M1017,611.5 a3.25,3.25 0 0 0 0,6.5 M1108,624.0 a3.25,3.25 0 0 1 0,6.5 M1017,618.0 a3.25,3.25 0 0 0 0,6.5 M1108,630.5 a3.25,3.25 0 0 1 0,6.5 M1017,624.5 a3.25,3.25 0 0 0 0,6.5 M1108,637.0 a3.25,3.25 0 0 1 0,6.5 M1017,631.0 a3.25,3.25 0 0 0 0,6.5 M1108,643.5 a3.25,3.25 0 0 1 0,6.5 M1017,637.5 a3.25,3.25 0 0 0 0,6.5 M1108,650.0 a3.25,3.25 0 0 1 0,6.5 M1017,644.0 a3.25,3.25 0 0 0 0,6.5 M1108,656.5 a3.25,3.25 0 0 1 0,6.5 M1017,650.5 a3.25,3.25 0 0 0 0,6.5 M1108,663.0 a3.25,3.25 0 0 1 0,6.5 M1017,657.0 a3.25,3.25 0 0 0 0,6.5 M1108,669.5 a3.25,3.25 0 0 1 0,6.5 M1017,663.5 a3.25,3.25 0 0 0 0,6.5 M1108,676.0 a3.25,3.25 0 0 1 0,6.5 M1017,670.0 a3.25,3.25 0 0 0 0,6.5 M1108,682.5 a3.25,3.25 0 0 1 0,6.5 M1017,676.5 a3.25,3.25 0 0 0 0,6.5 M1108,689.0 a3.25,3.25 0 0 1 0,6.5 M1017,683.0 a3.25,3.25 0 0 0 0,6.5 M1108,695.5 a3.25,3.25 0 0 1 0,6.5 M1017,689.5 a3.25,3.25 0 0 0 0,6.5 M1108,702.0 a3.25,3.25 0 0 1 0,6.5 M1017,696.0 a3.25,3.25 0 0 0 0,6.5 M1108,708.5 a3.25,3.25 0 0 1 0,6.5 M1017,702.5 a3.25,3.25 0 0 0 0,6.5 " fill="#c9b6e6" fill-opacity="0.6" stroke="#4a4aa0" stroke-width="0.9"/>
<path d="M1018.5,527.9 L1099,521.7 L1107.2,533 L1107.2,714.2 L1096.6,725.5 L1018.5,718.9 Z" fill="none" stroke="#2a2a6a" stroke-width="2"/>
<rect x="1010.4" y="513.6" width="104.6" height="219.4" fill="none" stroke="#57b8e8" stroke-width="1.2" stroke-dasharray="2.5 2.5"/>
<line x1="1062.9" y1="486" x2="1062.9" y2="513.6" stroke="#57b8e8" stroke-width="1.2" stroke-dasharray="2.5 2.5"/>
<circle cx="1062.9" cy="480.2" r="5.8" fill="#3a8ac8" stroke="#245a90" stroke-width="0.8"/>
<rect x="1005" y="508" width="11.5" height="11.5" fill="#3a80c4" stroke="#1e4a80" stroke-width="0.9"/>
<rect x="1109" y="508" width="11.5" height="11.5" fill="#3a80c4" stroke="#1e4a80" stroke-width="0.9"/>
<rect x="1005" y="727" width="11.5" height="11.5" fill="#3a80c4" stroke="#1e4a80" stroke-width="0.9"/>
<rect x="1109" y="727" width="11.5" height="11.5" fill="#3a80c4" stroke="#1e4a80" stroke-width="0.9"/>
<circle cx="1018.5" cy="527.9" r="5.6" fill="#b5a022" stroke="#5a5010" stroke-width="0.9"/>
<circle cx="1099" cy="521.7" r="5.6" fill="#b5a022" stroke="#5a5010" stroke-width="0.9"/>
<circle cx="1107.2" cy="533" r="5.6" fill="#b5a022" stroke="#5a5010" stroke-width="0.9"/>
<circle cx="1107.2" cy="714.2" r="5.6" fill="#b5a022" stroke="#5a5010" stroke-width="0.9"/>
<circle cx="1096.6" cy="725.5" r="5.6" fill="#b5a022" stroke="#5a5010" stroke-width="0.9"/>
<circle cx="1018.5" cy="718.9" r="5.6" fill="#b5a022" stroke="#5a5010" stroke-width="0.9"/>
<g><text x="1100.0" y="459.0" font-size="6.2" font-weight="bold" fill="#111" text-anchor="middle" textLength="49.0" lengthAdjust="spacingAndGlyphs">OPEN OFFICE  203</text>
<line x1="1075.5" y1="460.6" x2="1124.5" y2="460.6" stroke="#111" stroke-width="1.1"/>
</g>
<g><text x="1216.3" y="424.3" font-size="6.2" font-weight="bold" fill="#111" text-anchor="middle" textLength="37.0" lengthAdjust="spacingAndGlyphs">MEETING  201</text>
<line x1="1197.8" y1="425.9" x2="1234.8" y2="425.9" stroke="#111" stroke-width="1.1"/>
</g>
<g><text x="1265.7" y="424.3" font-size="6.2" font-weight="bold" fill="#111" text-anchor="middle" textLength="37.0" lengthAdjust="spacingAndGlyphs">MEETING  203</text>
<line x1="1247.2" y1="425.9" x2="1284.2" y2="425.9" stroke="#111" stroke-width="1.1"/>
</g>
<g><text x="1217.6" y="481.4" font-size="6.2" font-weight="bold" fill="#111" text-anchor="middle" textLength="37.0" lengthAdjust="spacingAndGlyphs">MEETING  202</text>
<line x1="1199.1" y1="483.0" x2="1236.1" y2="483.0" stroke="#111" stroke-width="1.1"/>
</g>
<g><text x="1265.7" y="481.4" font-size="6.2" font-weight="bold" fill="#111" text-anchor="middle" textLength="37.0" lengthAdjust="spacingAndGlyphs">MEETING  204</text>
<line x1="1247.2" y1="483.0" x2="1284.2" y2="483.0" stroke="#111" stroke-width="1.1"/>
</g>
<g><text x="1381.7" y="426.7" font-size="6.2" font-weight="bold" fill="#111" text-anchor="middle" textLength="33.0" lengthAdjust="spacingAndGlyphs">OFFICE  205</text>
<line x1="1365.2" y1="428.3" x2="1398.2" y2="428.3" stroke="#111" stroke-width="1.1"/>
</g>
<g><text x="1381.7" y="477.0" font-size="6.2" font-weight="bold" fill="#111" text-anchor="middle" textLength="33.0" lengthAdjust="spacingAndGlyphs">OFFICE  206</text>
<line x1="1365.2" y1="478.6" x2="1398.2" y2="478.6" stroke="#111" stroke-width="1.1"/>
</g>
<g><text x="1512.7" y="446.9" font-size="6.2" font-weight="bold" fill="#111" text-anchor="middle" textLength="50.0" lengthAdjust="spacingAndGlyphs">CONFERENCE  207</text>
<line x1="1487.7" y1="448.5" x2="1537.7" y2="448.5" stroke="#111" stroke-width="1.1"/>
</g>
<g><text x="1631.0" y="446.5" font-size="6.2" font-weight="bold" fill="#111" text-anchor="middle" textLength="38.0" lengthAdjust="spacingAndGlyphs">MEETING  208</text>
<line x1="1612.0" y1="448.1" x2="1650.0" y2="448.1" stroke="#111" stroke-width="1.1"/>
</g>
<g><text x="1702.8" y="446.8" font-size="6.2" font-weight="bold" fill="#111" text-anchor="middle" textLength="38.0" lengthAdjust="spacingAndGlyphs">MEETING  209</text>
<line x1="1683.8" y1="448.4" x2="1721.8" y2="448.4" stroke="#111" stroke-width="1.1"/>
</g>
<g><text x="1772.0" y="443.7" font-size="6.2" font-weight="bold" fill="#111" text-anchor="middle" textLength="38.0" lengthAdjust="spacingAndGlyphs">MEETING  210</text>
<line x1="1753.0" y1="445.3" x2="1791.0" y2="445.3" stroke="#111" stroke-width="1.1"/>
</g>
<g><text x="1855.3" y="444.0" font-size="6.2" font-weight="bold" fill="#111" text-anchor="middle" textLength="50.0" lengthAdjust="spacingAndGlyphs">CONFERENCE  211</text>
<line x1="1830.3" y1="445.6" x2="1880.3" y2="445.6" stroke="#111" stroke-width="1.1"/>
</g>
<g><text x="1668.7" y="518.4" font-size="6.2" font-weight="bold" fill="#111" text-anchor="middle" textLength="46.0" lengthAdjust="spacingAndGlyphs">RECEPTION  255</text>
<line x1="1645.7" y1="520.0" x2="1691.7" y2="520.0" stroke="#111" stroke-width="1.1"/>
</g>
<g><text x="1061.3" y="552.6" font-size="6.2" font-weight="bold" fill="#111" text-anchor="middle" textLength="37.0" lengthAdjust="spacingAndGlyphs">MEETING  247</text>
<line x1="1042.8" y1="554.2" x2="1079.8" y2="554.2" stroke="#111" stroke-width="1.1"/>
</g>
<g><text x="1064.0" y="628.0" font-size="6.2" font-weight="bold" fill="#111" text-anchor="middle" textLength="42.0" lengthAdjust="spacingAndGlyphs">CONFERENCE  246</text>
<line x1="1043.0" y1="629.6" x2="1085.0" y2="629.6" stroke="#111" stroke-width="1.1"/>
</g>
<g><text x="1064.0" y="699.7" font-size="6.2" font-weight="bold" fill="#111" text-anchor="middle" textLength="37.0" lengthAdjust="spacingAndGlyphs">MEETING  245</text>
<line x1="1045.5" y1="701.3" x2="1082.5" y2="701.3" stroke="#111" stroke-width="1.1"/>
</g>
<g><text x="1272.0" y="627.5" font-size="6.2" font-weight="bold" fill="#111" text-anchor="middle" textLength="49.0" lengthAdjust="spacingAndGlyphs">OPEN OFFICE  248</text>
<line x1="1247.5" y1="629.1" x2="1296.5" y2="629.1" stroke="#111" stroke-width="1.1"/>
</g>
<g><text x="1424.2" y="592.0" font-size="6.2" font-weight="bold" fill="#111" text-anchor="middle" textLength="30.0" lengthAdjust="spacingAndGlyphs">OFFICE  249</text>
<line x1="1409.2" y1="593.6" x2="1439.2" y2="593.6" stroke="#111" stroke-width="1.1"/>
</g>
<g><text x="1422.5" y="655.2" font-size="6.2" font-weight="bold" fill="#111" text-anchor="middle" textLength="27.0" lengthAdjust="spacingAndGlyphs">COPY  250</text>
<line x1="1409.0" y1="656.8" x2="1436.0" y2="656.8" stroke="#111" stroke-width="1.1"/>
</g>
<g><text x="1480.0" y="571.5" font-size="6.2" font-weight="bold" fill="#111" text-anchor="middle" textLength="30.0" lengthAdjust="spacingAndGlyphs">STAIR  251</text>
<line x1="1465.0" y1="573.1" x2="1495.0" y2="573.1" stroke="#111" stroke-width="1.1"/>
</g>
<g><text x="1524.0" y="571.5" font-size="6.2" font-weight="bold" fill="#111" text-anchor="middle" textLength="38.0" lengthAdjust="spacingAndGlyphs">ELECTRICAL  253</text>
<line x1="1505.0" y1="573.1" x2="1543.0" y2="573.1" stroke="#111" stroke-width="1.1"/>
</g>
<g><text x="1538.0" y="608.0" font-size="6.2" font-weight="bold" fill="#111" text-anchor="middle" textLength="37.0" lengthAdjust="spacingAndGlyphs">STORAGE  253A</text>
<line x1="1519.5" y1="609.6" x2="1556.5" y2="609.6" stroke="#111" stroke-width="1.1"/>
</g>
<g><text x="1530.0" y="627.0" font-size="6.2" font-weight="bold" fill="#111" text-anchor="middle" textLength="37.0" lengthAdjust="spacingAndGlyphs">STORAGE  254A</text>
<line x1="1511.5" y1="628.6" x2="1548.5" y2="628.6" stroke="#111" stroke-width="1.1"/>
</g>
<g><text x="1550.0" y="680.0" font-size="6.2" font-weight="bold" fill="#111" text-anchor="middle" textLength="44.0" lengthAdjust="spacingAndGlyphs">WOMEN'S RR  254</text>
<line x1="1528.0" y1="681.6" x2="1572.0" y2="681.6" stroke="#111" stroke-width="1.1"/>
</g>
<g><text x="1665.7" y="619.7" font-size="6.2" font-weight="bold" fill="#111" text-anchor="middle" textLength="28.0" lengthAdjust="spacingAndGlyphs">LOBBY  256</text>
<line x1="1651.7" y1="621.3" x2="1679.7" y2="621.3" stroke="#111" stroke-width="1.1"/>
</g>
<g><text x="1783.0" y="556.6" font-size="6.2" font-weight="bold" fill="#111" text-anchor="middle" textLength="34.0" lengthAdjust="spacingAndGlyphs">SERVER  257</text>
<line x1="1766.0" y1="558.2" x2="1800.0" y2="558.2" stroke="#111" stroke-width="1.1"/>
</g>
<g><text x="1803.7" y="631.3" font-size="6.2" font-weight="bold" fill="#111" text-anchor="middle" textLength="42.0" lengthAdjust="spacingAndGlyphs">STORAGE  258A</text>
<line x1="1782.7" y1="632.9" x2="1824.7" y2="632.9" stroke="#111" stroke-width="1.1"/>
</g>
<g><text x="1785.5" y="680.3" font-size="6.2" font-weight="bold" fill="#111" text-anchor="middle" textLength="38.0" lengthAdjust="spacingAndGlyphs">MEN'S RR  258</text>
<line x1="1766.5" y1="681.9" x2="1804.5" y2="681.9" stroke="#111" stroke-width="1.1"/>
</g>
<g><text x="1853.8" y="680.0" font-size="6.2" font-weight="bold" fill="#111" text-anchor="middle" textLength="30.0" lengthAdjust="spacingAndGlyphs">STAIR  259</text>
<line x1="1838.8" y1="681.6" x2="1868.8" y2="681.6" stroke="#111" stroke-width="1.1"/>
</g>
<g><text x="1909.2" y="591.2" font-size="6.2" font-weight="bold" fill="#111" text-anchor="middle" textLength="32.0" lengthAdjust="spacingAndGlyphs">OFFICE  261</text>
<line x1="1893.2" y1="592.8" x2="1925.2" y2="592.8" stroke="#111" stroke-width="1.1"/>
</g>
<g><text x="1907.5" y="655.2" font-size="6.2" font-weight="bold" fill="#111" text-anchor="middle" textLength="29.0" lengthAdjust="spacingAndGlyphs">COPY  262</text>
<line x1="1893.0" y1="656.8" x2="1922.0" y2="656.8" stroke="#111" stroke-width="1.1"/>
</g>
<g><text x="1103.2" y="784.8" font-size="6.2" font-weight="bold" fill="#111" text-anchor="middle" textLength="50.0" lengthAdjust="spacingAndGlyphs">OPEN OFFICE  244</text>
<line x1="1078.2" y1="786.4" x2="1128.2" y2="786.4" stroke="#111" stroke-width="1.1"/>
</g>
<g><text x="1239.3" y="763.8" font-size="6.2" font-weight="bold" fill="#111" text-anchor="middle" textLength="33.0" lengthAdjust="spacingAndGlyphs">OFFICE  242</text>
<line x1="1222.8" y1="765.4" x2="1255.8" y2="765.4" stroke="#111" stroke-width="1.1"/>
</g>
<g><text x="1239.3" y="818.2" font-size="6.2" font-weight="bold" fill="#111" text-anchor="middle" textLength="33.0" lengthAdjust="spacingAndGlyphs">OFFICE  243</text>
<line x1="1222.8" y1="819.8" x2="1255.8" y2="819.8" stroke="#111" stroke-width="1.1"/>
</g>
<g><text x="1358.2" y="771.5" font-size="6.2" font-weight="bold" fill="#111" text-anchor="middle" textLength="33.0" lengthAdjust="spacingAndGlyphs">OFFICE  240</text>
<line x1="1341.7" y1="773.1" x2="1374.7" y2="773.1" stroke="#111" stroke-width="1.1"/>
</g>
<g><text x="1407.6" y="771.5" font-size="6.2" font-weight="bold" fill="#111" text-anchor="middle" textLength="33.0" lengthAdjust="spacingAndGlyphs">OFFICE  238</text>
<line x1="1391.1" y1="773.1" x2="1424.1" y2="773.1" stroke="#111" stroke-width="1.1"/>
</g>
<g><text x="1358.2" y="822.4" font-size="6.2" font-weight="bold" fill="#111" text-anchor="middle" textLength="33.0" lengthAdjust="spacingAndGlyphs">OFFICE  241</text>
<line x1="1341.7" y1="824.0" x2="1374.7" y2="824.0" stroke="#111" stroke-width="1.1"/>
</g>
<g><text x="1406.6" y="822.4" font-size="6.2" font-weight="bold" fill="#111" text-anchor="middle" textLength="33.0" lengthAdjust="spacingAndGlyphs">OFFICE  239</text>
<line x1="1390.1" y1="824.0" x2="1423.1" y2="824.0" stroke="#111" stroke-width="1.1"/>
</g>
<g><text x="1499.6" y="779.9" font-size="6.2" font-weight="bold" fill="#111" text-anchor="middle" textLength="33.0" lengthAdjust="spacingAndGlyphs">OFFICE  236</text>
<line x1="1483.1" y1="781.5" x2="1516.1" y2="781.5" stroke="#111" stroke-width="1.1"/>
</g>
<g><text x="1547.0" y="779.9" font-size="6.2" font-weight="bold" fill="#111" text-anchor="middle" textLength="36.0" lengthAdjust="spacingAndGlyphs">MEETING  234</text>
<line x1="1529.0" y1="781.5" x2="1565.0" y2="781.5" stroke="#111" stroke-width="1.1"/>
</g>
<g><text x="1500.0" y="822.0" font-size="6.2" font-weight="bold" fill="#111" text-anchor="middle" textLength="33.0" lengthAdjust="spacingAndGlyphs">OFFICE  237</text>
<line x1="1483.5" y1="823.6" x2="1516.5" y2="823.6" stroke="#111" stroke-width="1.1"/>
</g>
<g><text x="1547.0" y="822.0" font-size="6.2" font-weight="bold" fill="#111" text-anchor="middle" textLength="36.0" lengthAdjust="spacingAndGlyphs">MEETING  235</text>
<line x1="1529.0" y1="823.6" x2="1565.0" y2="823.6" stroke="#111" stroke-width="1.1"/>
</g>
<g><text x="1663.4" y="805.7" font-size="6.2" font-weight="bold" fill="#111" text-anchor="middle" textLength="28.0" lengthAdjust="spacingAndGlyphs">BREAK  233</text>
<line x1="1649.4" y1="807.3" x2="1677.4" y2="807.3" stroke="#111" stroke-width="1.1"/>
</g>
<g><text x="1785.6" y="779.9" font-size="6.2" font-weight="bold" fill="#111" text-anchor="middle" textLength="36.0" lengthAdjust="spacingAndGlyphs">MEETING  231</text>
<line x1="1767.6" y1="781.5" x2="1803.6" y2="781.5" stroke="#111" stroke-width="1.1"/>
</g>
<g><text x="1828.5" y="779.9" font-size="6.2" font-weight="bold" fill="#111" text-anchor="middle" textLength="32.0" lengthAdjust="spacingAndGlyphs">OFFICE  229</text>
<line x1="1812.5" y1="781.5" x2="1844.5" y2="781.5" stroke="#111" stroke-width="1.1"/>
</g>
<g><text x="1785.6" y="822.0" font-size="6.2" font-weight="bold" fill="#111" text-anchor="middle" textLength="36.0" lengthAdjust="spacingAndGlyphs">MEETING  232</text>
<line x1="1767.6" y1="823.6" x2="1803.6" y2="823.6" stroke="#111" stroke-width="1.1"/>
</g>
<g><text x="1828.5" y="822.0" font-size="6.2" font-weight="bold" fill="#111" text-anchor="middle" textLength="32.0" lengthAdjust="spacingAndGlyphs">OFFICE  230</text>
<line x1="1812.5" y1="823.6" x2="1844.5" y2="823.6" stroke="#111" stroke-width="1.1"/>
</g>
<g><text x="1922.0" y="764.0" font-size="6.2" font-weight="bold" fill="#111" text-anchor="middle" textLength="14.0" lengthAdjust="spacingAndGlyphs">OFFICE</text>
<line x1="1915.0" y1="765.6" x2="1929.0" y2="765.6" stroke="#111" stroke-width="1.1"/>
</g>
<g><text x="1922.0" y="821.0" font-size="6.2" font-weight="bold" fill="#111" text-anchor="middle" textLength="14.0" lengthAdjust="spacingAndGlyphs">OFFICE</text>
<line x1="1915.0" y1="822.6" x2="1929.0" y2="822.6" stroke="#111" stroke-width="1.1"/>
</g>
<g transform="rotate(-90 1478 670)"><text x="1478.0" y="672.0" font-size="6.2" font-weight="bold" fill="#111" text-anchor="middle" textLength="40.0" lengthAdjust="spacingAndGlyphs">MOTHER'S RM.  252</text>
<line x1="1458.0" y1="673.6" x2="1498.0" y2="673.6" stroke="#111" stroke-width="1.1"/>
</g>
<g transform="rotate(-90 1854.7 582)"><text x="1854.7" y="584.0" font-size="6.2" font-weight="bold" fill="#111" text-anchor="middle" textLength="40.0" lengthAdjust="spacingAndGlyphs">STORAGE  260</text>
<line x1="1834.7" y1="585.6" x2="1874.7" y2="585.6" stroke="#111" stroke-width="1.1"/>
</g>
<text x="1381.7" y="438.5" font-size="6.2" fill="#e8202a" text-anchor="middle">204.62 sf</text>
<text x="1517.6" y="457.5" font-size="6" fill="#2a4a2a" text-anchor="middle" font-family="Liberation Serif">23.15 sq m</text>
<text x="1667.3" y="476" font-size="9.5" font-weight="bold" fill="#e8202a" text-anchor="middle" font-family="Liberation Serif">Room 001</text>
<text x="1344.6" y="628.5" font-size="8.6" font-weight="bold" fill="#e8202a" text-anchor="middle" textLength="45" lengthAdjust="spacingAndGlyphs">160.89 sq m</text>
<text x="1790" y="593" font-size="3.5" fill="#e8202a" text-anchor="middle">Mega Duration</text><line x1="1810" y1="592" x2="1824" y2="592" stroke="#e8202a" stroke-width="0.8"/>
<line x1="938.6" y1="1087.6" x2="1928" y2="1087.6" stroke="#222" stroke-width="1.2"/>
<line x1="1321.4" y1="1087.6" x2="1321.4" y2="1174" stroke="#222" stroke-width="1.2"/>
<line x1="1443.1" y1="1087.6" x2="1443.1" y2="1174" stroke="#222" stroke-width="1.2"/>
<line x1="1565" y1="1087.6" x2="1565" y2="1174" stroke="#222" stroke-width="1.2"/>
<line x1="1686.5" y1="1087.6" x2="1686.5" y2="1174" stroke="#222" stroke-width="1.2"/>
<line x1="1808.5" y1="1087.6" x2="1808.5" y2="1174" stroke="#222" stroke-width="1.2"/>
<rect x="949.2" y="1093.7" width="162.3" height="85" fill="none" stroke="#8e97aa" stroke-width="1.2"/>
<rect x="952.5" y="1097" width="155.7" height="80" fill="none" stroke="#b8bfcc" stroke-width="0.8"/>
<text x="1031" y="1129.5" font-size="19" font-weight="bold" fill="#4d5669" text-anchor="middle" textLength="122" lengthAdjust="spacing">BRIGHTER</text>
<text x="1031" y="1148" font-size="19" font-weight="bold" fill="#4d5669" text-anchor="middle" textLength="122" lengthAdjust="spacing">GRAPHICS</text>
<text x="1031" y="1160" font-size="3.6" font-weight="bold" fill="#4d5669" text-anchor="middle" textLength="97" lengthAdjust="spacingAndGlyphs">DIGITISING CONSTRUCTION SINCE 2003</text>
<rect x="1119" y="1112" width="44" height="42" fill="#e2f8fd"/><rect x="1160" y="1120" width="152" height="31.5" fill="#e2f8fd"/>
<path d="M1120.4,1114.8 h5.8 v31.8 h26 v-25.2 h-18.6 v-6.6 h24.3 v38.3 h-37.5z" fill="#3b5bd0"/>
<rect x="1133.6" y="1127.4" width="11.4" height="12.6" fill="#3b5bd0"/>
<text x="1168.6" y="1146.6" font-size="34" fill="#3b5bd0" stroke="#3b5bd0" stroke-width="0.8" textLength="139.7" lengthAdjust="spacingAndGlyphs">BLUEBEAM</text>
<text x="1168.6" y="1160.3" font-size="8.6" font-weight="bold" fill="#222" textLength="74.5" lengthAdjust="spacingAndGlyphs">Platinum Partner</text>
<text x="1331.8" y="1100" font-size="10.3" fill="#1a1a1a" font-weight="bold" textLength="80" lengthAdjust="spacingAndGlyphs">Capture Engineers</text>
<text x="1331.8" y="1111.3" font-size="10.3" fill="#1a1a1a">Mechanical</text>
<text x="1331.8" y="1122.4" font-size="10.3" fill="#1a1a1a">Electrical</text>
<text x="1331.8" y="1133.6" font-size="10.3" fill="#1a1a1a">Plumbing</text>
<text x="1331.8" y="1155.9" font-size="10.3" fill="#1a1a1a">1234 Miller St.</text>
<text x="1331.8" y="1167" font-size="10.3" fill="#1a1a1a" textLength="101" lengthAdjust="spacingAndGlyphs">Manchester, NH 06930</text>
<text x="1456.8" y="1100.6" font-size="10.3" fill="#1a1a1a" font-weight="bold" textLength="94" lengthAdjust="spacingAndGlyphs">REVU ARCHITECTS</text>
<text x="1456.8" y="1122.6" font-size="10.3" fill="#1a1a1a">5555 N. Broad St</text>
<text x="1456.8" y="1134" font-size="10.3" fill="#1a1a1a" textLength="91" lengthAdjust="spacingAndGlyphs">Pasadena CA 91101</text>
<text x="1574.6" y="1100.6" font-size="10.3" fill="#1a1a1a" font-weight="bold" textLength="87" lengthAdjust="spacingAndGlyphs">OFFICE BUILDING</text>
<text x="1574.6" y="1123" font-size="10.3" fill="#1a1a1a" textLength="85" lengthAdjust="spacingAndGlyphs">Project No: 323232</text>
<text x="1574.6" y="1145" font-size="10.3" fill="#1a1a1a">Project Address:</text>
<text x="1574.6" y="1156.2" font-size="10.3" fill="#1a1a1a">123 Schonsett St</text>
<text x="1574.6" y="1167.1" font-size="10.3" fill="#1a1a1a" textLength="81" lengthAdjust="spacingAndGlyphs">Chicago, IL 60601</text>
<text x="1693.7" y="1100.6" font-size="4.4" font-weight="bold" fill="#333">LEGAL DISCLAIMER:</text>
<text x="1693.7" y="1112.5" font-size="4.6" fill="#444">ALL IDEAS, DESIGNS, AND PLANS INDICATED</text>
<text x="1693.7" y="1118.2" font-size="4.6" fill="#444">OR REPRESENTED BY THESE DRAWINGS</text>
<text x="1693.7" y="1123.9" font-size="4.6" fill="#444">ARE OWNED AND ARE THE PROPERTY OF</text>
<text x="1693.7" y="1129.6" font-size="4.6" fill="#444">BLUEBEAM, INC. AND WERE CREATED AND</text>
<text x="1693.7" y="1135.3" font-size="4.6" fill="#444">DEVELOPED FOR DEMONSTRATION</text>
<text x="1693.7" y="1141.0" font-size="4.6" fill="#444">PURPOSES ONLY. NONE OF SUCH IDEAS,</text>
<text x="1693.7" y="1146.7" font-size="4.6" fill="#444">DESIGNS, OR PLANS SHALL BE USED FOR</text>
<text x="1693.7" y="1152.4" font-size="4.6" fill="#444">ANY PURPOSE WHATSOEVER EXCEPT AS A</text>
<text x="1693.7" y="1158.1" font-size="4.6" fill="#444">DEMONSTRATION SET WITHOUT THE</text>
<text x="1693.7" y="1163.8" font-size="4.6" fill="#444">EXPRESSED WRITTEN CONCENT OF</text>
<text x="1693.7" y="1169.5" font-size="4.6" fill="#444">BLUEBEAM, INC.</text>
<text x="1822" y="1095.4" font-size="4.2" fill="#555">DATE</text><text x="1916" y="1095.4" font-size="4.2" fill="#555" text-anchor="end">03/04/2018</text>
<text x="1822" y="1101.5" font-size="4.2" fill="#555">ISSUED FOR:</text><text x="1916" y="1101.5" font-size="4.2" fill="#555" text-anchor="end">INTERNAL REVIEW</text>
<text x="1822" y="1110" font-size="4.2" fill="#555">PROJECT</text><text x="1916" y="1110" font-size="4.2" fill="#555" text-anchor="end">3232</text>
<text x="1822" y="1116.5" font-size="4.2" fill="#555">DRAWN BY:</text><text x="1916" y="1116.5" font-size="4.2" fill="#555" text-anchor="end">Author</text>
<text x="1822" y="1122.7" font-size="4.2" fill="#555">CHECKED BY:</text><text x="1916" y="1122.7" font-size="4.2" fill="#555" text-anchor="end">Checker</text>
<text x="1822" y="1129" font-size="4.2" fill="#555">APPROVED BY:</text><text x="1916" y="1129" font-size="4.2" fill="#555" text-anchor="end">Approver</text>
<path d="M1822,1096.5 h94.5 M1822,1104 h94.5 M1822,1111 h94.5 M1822,1117.5 h94.5 M1822,1124 h94.5 M1822,1130 h94.5" stroke="#444" stroke-width="0.7"/>
<rect x="1822" y="1131.5" width="94.5" height="5.5" fill="none" stroke="#333" stroke-width="0.9"/>
<text x="1848" y="1136" font-size="3.5" fill="#555">#     DATE        DESCRIPTION</text></svg><!--/PLAN-->
<div class="a" style="left:1935px;top:207px;width:10px;height:907px;background:#8c8c8c"></div>

<!-- tab bar extras -->
<svg style="left:883px;top:79px" width="1125" height="1145" viewBox="883 79 1125 1145" fill="none" stroke="#f0f0f0" stroke-width="2">
 <path d="M1151,96 l14,14 M1165,96 l-14,14"/>
 <path d="M1923,100 l6,6 l6,-6"/>
 <path d="M1955,85.7 h40" stroke-dasharray="2 2.5" stroke-width="1.5"/>
 <!-- right toolbar -->
 <g stroke-width="1.8">
 <path d="M1963,126 l23,-24"/>
 <path d="M1963,174 l18,-18"/><path d="M1987,150 l-13,3.5 l9.5,9.5z" fill="#f0f0f0"/>
 <path d="M1963,223 q2,-18 24,-22"/>
 <path d="M1962.4,271.8 L1971.4,250.9 L1974.4,264.3 L1981.9,255.4 L1986.3,247.2"/>
 <path d="M1962,308.4 h24 M1965.5,302.5 v11 M1983.5,302.5 v11 M1962,311.5 l7,-6 M1980,311.5 l7,-6" stroke-width="1.6"/>
 <path d="M1963,346 h24 v18 h-24z"/>
 <ellipse cx="1975" cy="404" rx="12" ry="9"/>
 <path d="M1963,440 v24 h24 l-9,-12 l9,-12z"/>
 </g>
 <g stroke="#7d5fc0" stroke-width="1.3">
  <path d="M1961,490.7 h27.5 M1961,490.7 v24 M1965.5,490.7 v-2.5 M1970.1,490.7 v-2.5 M1974.7,490.7 v-2.5 M1979.3,490.7 v-2.5 M1983.9,490.7 v-2.5 M1988.5,490.7 v-2.5 M1961,495.2 h-2.5 M1961,499.8 h-2.5 M1961,504.4 h-2.5 M1961,509.0 h-2.5 M1961,513.6 h-2.5"/>
  <path d="M1961,537.8 h27.5 M1961,537.8 v24 M1965.5,537.8 v-2.5 M1970.1,537.8 v-2.5 M1974.7,537.8 v-2.5 M1979.3,537.8 v-2.5 M1983.9,537.8 v-2.5 M1988.5,537.8 v-2.5 M1961,542.3 h-2.5 M1961,546.9 h-2.5 M1961,551.5 h-2.5 M1961,556.1 h-2.5 M1961,560.7 h-2.5"/>
  <path d="M1961,586.5 h27.5 M1961,586.5 v24 M1965.5,586.5 v-2.5 M1970.1,586.5 v-2.5 M1974.7,586.5 v-2.5 M1979.3,586.5 v-2.5 M1983.9,586.5 v-2.5 M1988.5,586.5 v-2.5 M1961,591.0 h-2.5 M1961,595.6 h-2.5 M1961,600.2 h-2.5 M1961,604.8 h-2.5 M1961,609.4 h-2.5"/>
  <path d="M1961,635.3 h27.5 M1961,635.3 v24 M1965.5,635.3 v-2.5 M1970.1,635.3 v-2.5 M1974.7,635.3 v-2.5 M1979.3,635.3 v-2.5 M1983.9,635.3 v-2.5 M1988.5,635.3 v-2.5 M1961,639.8 h-2.5 M1961,644.4 h-2.5 M1961,649.0 h-2.5 M1961,653.6 h-2.5 M1961,658.2 h-2.5"/>
 </g>
 <g stroke-width="1.6">
  <path d="M1969.4,503 L1976.8,496.4 H1986.4 V513.3 H1969.4 Z"/>
  <rect x="1967.2" y="500.8" width="4.4" height="4.4" fill="#f0f0f0" stroke="none"/>
  <rect x="1974.6" y="494.2" width="4.4" height="4.4" fill="#f0f0f0" stroke="none"/>
  <rect x="1984.2" y="494.2" width="4.4" height="4.4" fill="#f0f0f0" stroke="none"/>
  <rect x="1984.2" y="511.09999999999997" width="4.4" height="4.4" fill="#f0f0f0" stroke="none"/>
  <rect x="1967.2" y="511.09999999999997" width="4.4" height="4.4" fill="#f0f0f0" stroke="none"/>
  <path d="M1968.5,563.4 V551.5 L1977,542.7 H1988 V563.4Z"/>
  <path d="M1968.5,593.4 v14.4 M1987.5,593.4 v14.4 M1970,600.6 h16"/><path d="M1969.5,600.6 l6,-4 v8z M1986.5,600.6 l-6,-4 v8z" fill="#f0f0f0" stroke="none"/>
  <path d="M1972,655 l2,-12 M1976.5,655 l2,-12 M1981,655 l2,-12 M1985.5,655 l2,-12 M1966,656 l22,-11"/>
 </g>
 <path d="M1955,675.8 h45" stroke-dasharray="2 2.5" stroke-width="1.5"/>
 <g stroke-width="1.6">
 <path d="M1967,693 h23 v23 h-23z"/>
 <path d="M1973,711 l5.5,-13 l5.5,13 M1975,706 h7" stroke-width="1.4"/>
 <path d="M1967,765 l8,-12 l5,6z" />
 <path d="M1975,753 l8,-10 l8,8 l-11,8 M1983,743 l5,-8 M1991,751 l4,-3 M1988,745 l4,3" stroke="#c0b02a"/>
 <path d="M1966,813 l6,-8 l4,4z" fill="#f0f0f0"/>
 <path d="M1972,805 l10,-12 l6,6 l-12,10 M1982,793 l6,-6 M1988,799 l5,-3" stroke="#4a56c8"/>
 <path d="M1968,838 h19 v10 h-19z M1966,862 q2,-4 4,0 q2,-4 4,0 q2,-4 4,0 q2,-4 4,0 q2,-4 4,0 q2,-4 4,0 M1987,848 l4,10"/>
 <path d="M1978.0,888.7 A3.50,3.50 0 0 1 1984.2,891.3 A3.50,3.50 0 0 1 1986.8,897.5 A3.50,3.50 0 0 1 1984.2,903.7 A3.50,3.50 0 0 1 1978.0,906.3 A3.50,3.50 0 0 1 1971.8,903.7 A3.50,3.50 0 0 1 1969.2,897.5 A3.50,3.50 0 0 1 1971.8,891.3 A3.50,3.50 0 0 1 1978.0,888.7z"/>
 <path d="M1968,934 h19 v10 h-19z M1987,944 l-7,12 M1980,956 l0,-5 M1980,956 l5,-2"/>
 <path d="M1967,1003 h22 v4 h-22z M1969,1003 v-4 h18 v4 M1975,999 v-6 M1981,999 v-6 M1975,993 q-4,-3 0,-8 q3,-2 6,0 q4,5 0,8" />
 <path d="M1993,993 l4,4 l4,-4" stroke-width="1.8"/>
 <path d="M1967,1031 h23 v22 h-23z M1968,1052 l7,-9 l4,5 l3,-3 l8,8"/><circle cx="1975" cy="1037" r="2"/>
 <path d="M1971,1085 v-10 M1966,1080 h10" stroke-width="1.8"/>
 <path d="M1971,1085 v20 h20 v-20 h-20" stroke-dasharray="3 3"/>
 </g>
</svg>
<!-- bottom doc toolbar -->
<div class="a" style="left:1132px;top:1175px;width:49px;height:48px;background:#1f5b8a"></div>
<div class="a" style="left:1397px;top:1175px;width:15px;height:48px;background:#3a3a3a"></div>
<div class="a" style="left:1134px;top:1224px;width:97px;height:48px;background:#1f5b8a"></div>
<svg style="left:883px;top:1174px" width="1125" height="98" viewBox="883 1174 1125 98" fill="none" stroke="#f0f0f0" stroke-width="1.7">
 <path d="M896,1187 h22 v23 h-22z M896,1191 h22" stroke="#6a6a6a"/>
 <path d="M944,1187 h23 v23 h-23z M955.5,1187 v23"/>
 <path d="M992,1187 h23 v23 h-23z M992,1198.5 h23 M992,1193 h23" />
 <path d="M1031,1187 v23" stroke="#6a6a6a"/>
 <path d="M1049,1187 h12 l6,6 v17 h-18z M1061,1187 v6 h6 M1058,1193 v12 M1052,1199 h12 M1056,1195 l2,-2 l2,2 M1056,1203 l2,2 l2,-2 M1054,1197 l-2,2 l2,2 M1062,1197 l2,2 l-2,2"/>
 <path d="M1097,1187 h19 M1097,1187 v3 M1116,1187 v3 M1097,1210 v-14 h12 l6,6 v8 M1100,1207 h13 M1100,1207 l3,-2 M1100,1207 l3,2 M1113,1207 l-3,-2 M1113,1207 l-3,2"/>
 <path d="M1147,1203 v-10 q0,-2 2,-2 q2,0 2,2 v5 M1151,1198 v-9 q0,-2 2,-2 q2,0 2,2 v8 M1155,1197 v-9 q0,-2 2,-2 q2,0 2,2 v9 M1159,1197 v-7 q0,-2 2,-2 q2,0 2,2 v10 q0,8 -7,10 q-6,1 -9,-4 l-4,-6 q-1,-3 2,-3 l3,2" stroke-width="1.8"/>
 <path d="M1198,1186 l14,12 l-6,1 l4,7 l-3,2 l-4,-7 l-5,4z"/>
 <path d="M1243,1186 h8 M1247,1186 v24 M1243,1210 h8 M1252,1205 l4.5,-11 l4.5,11 M1254,1201 h5" stroke-width="1.5"/>
 <circle cx="1298" cy="1196" r="8.5"/><path d="M1304,1202 l8,8 M1294,1196 h8 M1298,1192 v8" stroke-width="1.6"/>
 <path d="M1345,1190 v14 M1356,1190 l-8,7 l8,7z" stroke="#5c5c5c" stroke-width="1.5"/>
 <path d="M1398,1195 l6,6 l6,-6" stroke-width="2"/>
 <!-- status icons -->
 <path d="M1050,1241 h23 M1050,1248 h23 M1050,1255 h23 M1054,1236 v24 M1061,1236 v24 M1068,1236 v24" stroke-width="2"/>
 <path d="M1098,1241 h22 M1098,1248 h10 M1098,1255 h8 M1102,1236 v24 M1109,1236 v9 M1116,1236 v5" stroke-width="2"/><path d="M1111,1246.5 h5 a7,7 0 0 1 0,14 h-5" stroke="#f0f0f0" stroke-width="4.2"/><path d="M1110,1246.5 h6 a7,7 0 0 1 0,14 h-6" stroke="#2e2e2e" stroke-width="1.3"/><path d="M1150,1236 h8 l5,5 v4 M1150,1236 v24 h6 M1158,1236 v5 h5" stroke="#d0f0ff" stroke-width="2"/><path d="M1159,1246.5 h5 a7,7 0 0 1 0,14 h-5" stroke="#d0f0ff" stroke-width="4.2"/><path d="M1158,1246.5 h6 a7,7 0 0 1 0,14 h-6" stroke="#1f5b8a" stroke-width="1.3"/><path d="M1197,1258 l4,-5 l3,3 l-4,3z M1200,1252 l10,-12 l6,5" stroke="#d0f0ff" stroke-width="2"/><path d="M1207,1246.5 h5 a7,7 0 0 1 0,14 h-5" stroke="#d0f0ff" stroke-width="4.2"/><path d="M1206,1246.5 h6 a7,7 0 0 1 0,14 h-6" stroke="#1f5b8a" stroke-width="1.3"/><path d="M1245,1258 l4,-5 l3,3 l-4,3z M1248,1252 l10,-12 l6,5 l-6,5" stroke-width="2"/><path d="M1259,1251 a5,5 0 1 0 6,-2.5 M1265,1248.5 l0.5,-3.5 M1265,1248.5 l-3.5,-0.5" stroke="#5a5ad8" stroke-width="2.2"/>
 <path d="M1291,1237 h25 v22 h-25z M1291,1241 h25 M1296,1249 h17 l-4,-3 M1313,1254 h-17 l4,3" stroke-width="1.7"/>
 <path d="M1331,1244 l6,6 l6,-6" stroke-width="2"/>
</svg>
<div class="t" style="left:1427px;top:1190px;font-size:18px">106.68 x 76.20 cm</div>
<div class="t" style="left:1605px;top:1190px;font-size:18px">X: 9.525 cm = 30'-0", Y: 9.525 cm = 30'-0"</div>
<div class="t" style="left:1376px;top:1240px;font-size:16px">X: 9.525 cm = 30'-0", Y: 9.525 cm = 30'-0"</div>
<div class="t" style="left:1704px;top:1240px;font-size:16.3px">106.68 x 76.20 cm</div>
<div class="t" style="left:1888px;top:1240px;font-size:16.5px">(1.98, 48.22)</div>
<!-- status -->
<div class="a" style="left:0;top:1223px;width:2008px;height:1px;background:#121212"></div>
</body></html>
